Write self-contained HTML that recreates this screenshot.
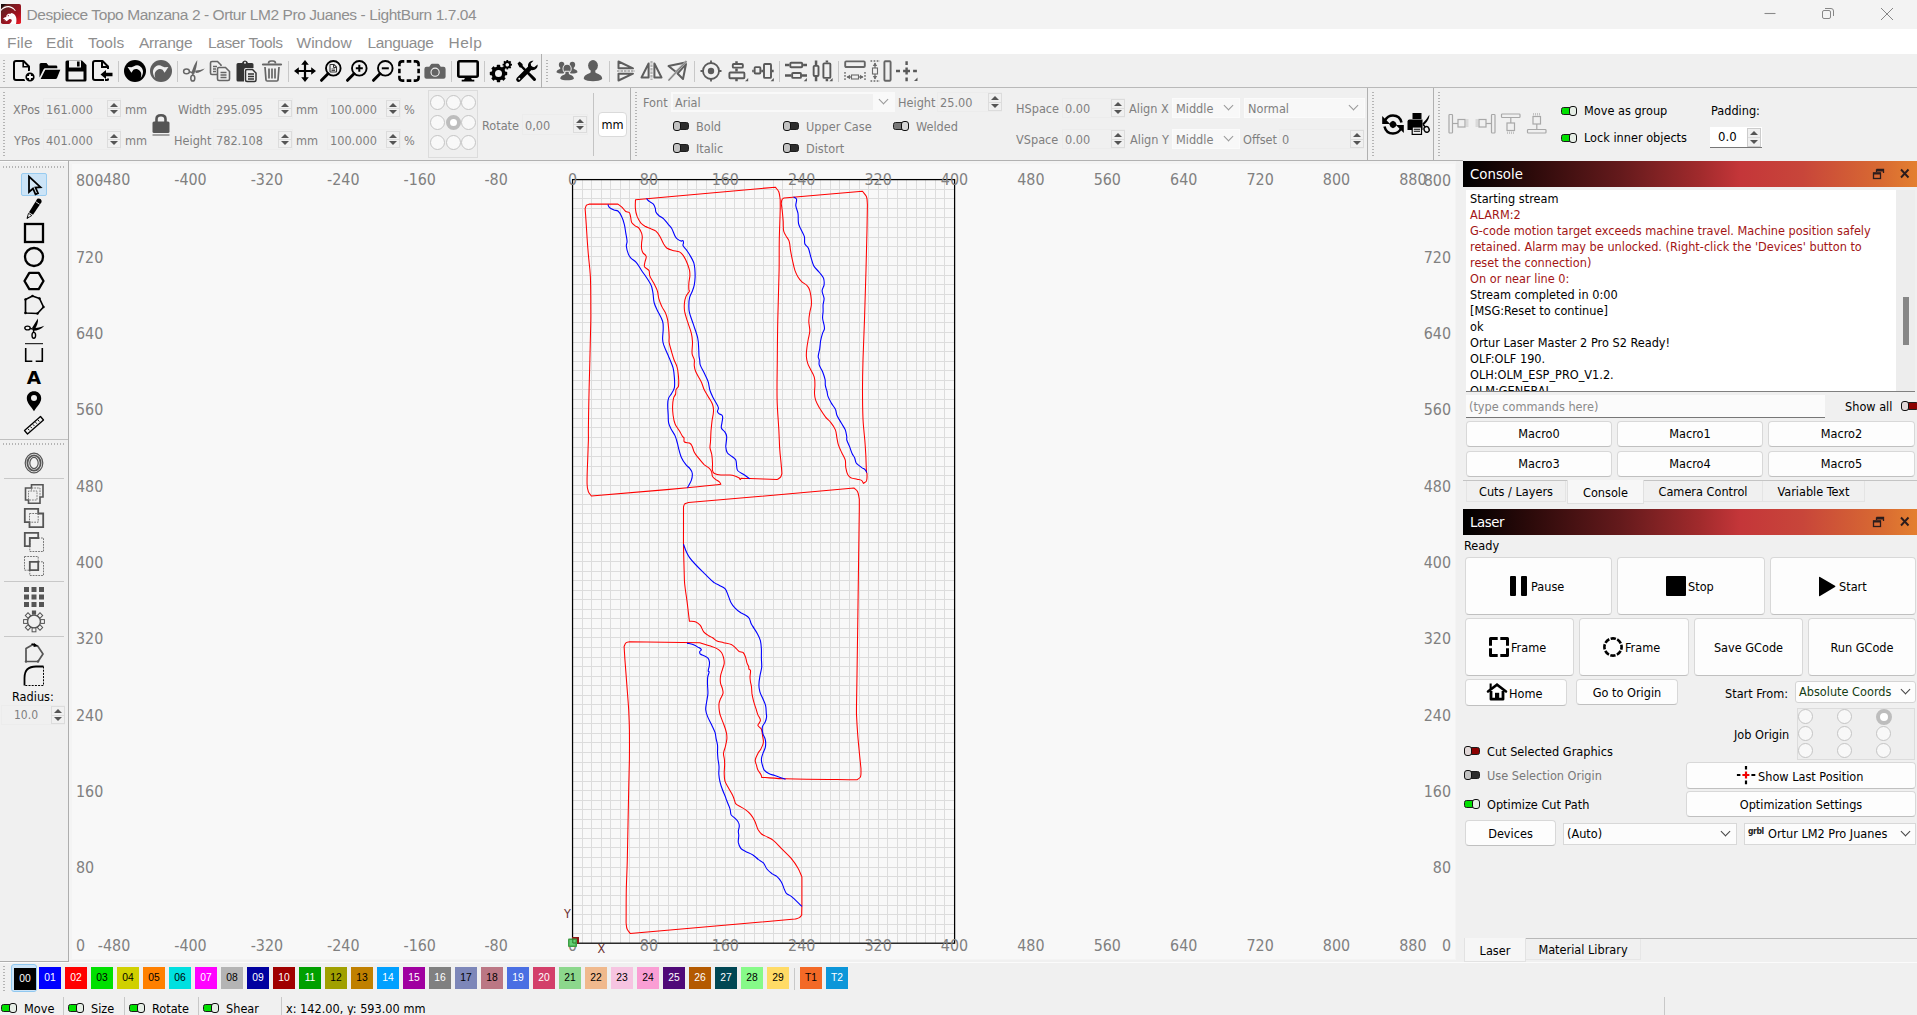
<!DOCTYPE html>
<html lang="en"><head><meta charset="utf-8"><title>Despiece Topo Manzana 2 - Ortur LM2 Pro Juanes - LightBurn 1.7.04</title>
<style>
*,*:before,*:after{box-sizing:border-box;margin:0;padding:0}
html,body{width:1917px;height:1015px;overflow:hidden;background:#f0f0f0}
body{font-family:"DejaVu Sans Condensed","Liberation Sans",sans-serif;font-size:12.6px;color:#000}
#app{position:relative;width:1917px;height:1015px;overflow:hidden;background:#f0f0f0}
.abs{position:absolute}
.t{position:absolute;white-space:nowrap;line-height:16px;height:16px}
.g{color:#7f7f7f}
#titlebar{position:absolute;left:0;top:0;width:1917px;height:29px;background:#f3f3f3}
#titlebar .ttl{font-family:"Liberation Sans",sans-serif;position:absolute;left:26.5px;top:4px;font-size:15.5px;letter-spacing:-0.42px;line-height:22px;color:#8f8f8f;white-space:nowrap}
#menubar{position:absolute;left:0;top:29px;width:1917px;height:25px;background:#fff}
#menubar span{font-family:"Liberation Sans",sans-serif;position:absolute;top:4px;font-size:15.5px;line-height:20px;color:#8e8e8e;white-space:nowrap}
.hline{position:absolute;height:1px;background:#a0a0a0}
.vline{position:absolute;width:1px;background:#a0a0a0}
.sep{position:absolute;width:1px;background:#c8c8c8}
.hsep{position:absolute;height:1px;background:#c8c8c8}
.vdots{position:absolute;width:2px;background:repeating-linear-gradient(to bottom,#b4b4b4 0 1px,transparent 1px 3px)}
.hdots{position:absolute;height:2px;background:repeating-linear-gradient(to right,#b4b4b4 0 1px,transparent 1px 3px)}
.ic{position:absolute;overflow:visible}
.inp{position:absolute;border:1px solid #ececec;background:#f0f0f0;color:#7f7f7f;font-size:12.6px;line-height:19px;padding-left:3px;white-space:nowrap}
.spin{position:absolute;width:14px;border:1px solid #dcdcdc;background:#f0f0f0}
.spin:before{content:"";position:absolute;left:2px;top:2px;border:4px solid transparent;border-top:0;border-bottom:4px solid #555}
.spin:after{content:"";position:absolute;left:2px;bottom:2px;border:4px solid transparent;border-bottom:0;border-top:4px solid #555}
.spin i{position:absolute;left:0;right:0;top:50%;height:1px;background:#dcdcdc;margin-top:-0.5px}
.combo{position:absolute;border:1px solid #fbfbfb;background:#f8f8f8;color:#7f7f7f;font-size:12.6px;line-height:18px;padding-left:3px;padding-top:1px;white-space:nowrap}
.chev{position:absolute;width:7px;height:7px;border-right:1px solid #999;border-bottom:1px solid #999;transform:rotate(45deg)}
.tog{position:absolute;width:16px;height:10px}
.tog:before{content:"";position:absolute;left:1px;right:0;top:1px;height:8px;border-radius:2.5px;background:#2d2d2d;border:1px solid #1c1c1c}
.tog.on:before{left:0;right:1px}
.tog i{position:absolute;top:0;width:8px;height:10px;border-radius:3px;background:#c2c2c2;border:1px solid #111}
.tog.off i{left:0}
.tog.on i{right:0;background:#e6eee6}
.tog.green:before{background:#00e000}
.tog.red:before{background:#8b0000}
.tog.red i{background:#e2d8d8}
.tog.gray:before{background:#777}
.tog.gray i{background:#d8d8d8}
.btn{position:absolute;background:#fdfdfd;border:1px solid #d8d8d8;border-bottom-color:#c0c0c0;border-radius:4px;font-size:12.6px;text-align:center;white-space:nowrap;color:#000}
.ptitle{position:absolute;left:1463px;width:454px;height:26px;background:linear-gradient(to right,#000 0%,#2c0a0a 15%,#651a1c 35%,#a02a2c 52%,#c43639 61%,#c8463a 75%,#d86a32 92%,#e48030 100%);color:#fff;font-size:14.8px;line-height:25px;padding-left:7px}
.ptitle svg{position:absolute;top:0}
.radio{position:absolute;width:15px;height:15px;border-radius:50%;border:1px solid #c4c4c4;background:#f8f8f8}
.radio.sel{border:4px solid #bdbdbd;background:#fff}
.sw{position:absolute;top:967px;width:22px;height:22px;font-family:"Liberation Sans",sans-serif;font-size:10.3px;line-height:22px;text-align:center}
.tab{position:absolute;font-size:12.6px;text-align:center;white-space:nowrap;padding-top:1px}

.t2{margin-top:1px}
.t2i{padding-top:1px;padding-left:2px}
.r16{width:16px;height:16px}

</style></head>
<body>
<div id="app">
<!-- titlebar.html -->
<div id="titlebar">
<svg class="ic" style="left:1px;top:4px" width="20" height="20" viewBox="0 0 20 20"><defs><linearGradient id="lg0" x1="0" y1="0" x2="1" y2="1"><stop offset="0" stop-color="#4a2a22"/><stop offset="0.350" stop-color="#7a1a20"/><stop offset="0.700" stop-color="#a81220"/><stop offset="1" stop-color="#f61c26"/></linearGradient></defs><rect x="0" y="0" width="20" height="20" rx="1.800" fill="url(#lg0)"/><path d="M0 0 H6 C3.500 1 1.500 2.600 0 4.800 Z" fill="#1e0c0c"/><path d="M0 5.600 C2.500 2.400 6 1.600 9 2.300 C11.800 3 13.800 4.800 14.900 7 L13.700 6.700 C12.500 5 10.800 3.800 8.600 3.400 C5.500 2.900 2.500 4.200 0 7 Z" fill="#fff"/><path d="M6.300 10.600 L8 9.600 L9 10 L10.500 9 C12.500 9.300 14.300 10.800 15 13 C15.600 15 15.600 17.500 15 20 H8.200 C9.800 19 10.800 17.600 10.800 16 C10 15 8.800 14.800 7.800 15.600 L6 17 L4.600 17.200 L5.200 16.200 L3.200 16.300 L4.200 15.300 L2 15 C2.600 13.800 4 13.200 5.300 13 C5.200 12 5.600 11.200 6.300 10.600 Z" fill="#fff"/><circle cx="7.300" cy="11.700" r="0.600" fill="#8c1420"/></svg>
<div class="ttl">Despiece Topo Manzana 2 - Ortur LM2 Pro Juanes - LightBurn 1.7.04</div>
<svg class="ic" style="left:1762px;top:7px" width="16" height="14" viewBox="0 0 16 14"><path d="M2.5 6.5 H13.5" stroke="#8a8a8a" stroke-width="1.100" fill="none"/></svg>
<svg class="ic" style="left:1820px;top:6px" width="16" height="16" viewBox="0 0 16 16"><rect x="2.5" y="4.5" width="8" height="8" rx="1.5" stroke="#868686" fill="none"/><path d="M5 2.5 H11 Q13.5 2.5 13.5 5 V10" stroke="#868686" fill="none"/></svg>
<svg class="ic" style="left:1879px;top:6px" width="16" height="16" viewBox="0 0 16 16"><path d="M2 2 L14 14 M14 2 L2 14" stroke="#858585" stroke-width="1" fill="none"/></svg>
</div>
<div id="menubar">
<span style="left:7px;letter-spacing:0.2px">File</span><span style="left:46px;letter-spacing:0.1px">Edit</span><span style="left:88px">Tools</span><span style="left:139px;letter-spacing:-0.27px">Arrange</span><span style="left:208px;letter-spacing:-0.39px">Laser Tools</span><span style="left:296.500px">Window</span><span style="left:367.500px;letter-spacing:-0.36px">Language</span><span style="left:448.500px;letter-spacing:0.5px">Help</span>
</div>

<!-- toolbar1.html -->
<div class="abs" style="left:0;top:54px;width:1917px;height:34px;background:#f0f0f0"></div>
<div class="hline" style="left:0;top:87px;width:1917px;background:#b9b9b9"></div>
<div class="vdots" style="left:3px;top:60px;height:23px"></div>
<div class="vline" style="left:541px;top:54px;height:34px;background:#b0b0b0"></div>
<div class="vdots" style="left:546px;top:60px;height:23px"></div>
<div class="sep" style="left:118px;top:61px;height:21px"></div>
<div class="sep" style="left:177px;top:61px;height:21px"></div>
<div class="sep" style="left:288px;top:61px;height:21px"></div>
<div class="sep" style="left:451px;top:61px;height:21px"></div>
<div class="sep" style="left:484px;top:61px;height:21px"></div>
<div class="sep" style="left:609px;top:61px;height:21px"></div>
<div class="sep" style="left:694px;top:61px;height:21px"></div>
<div class="sep" style="left:779px;top:61px;height:21px"></div>
<div class="sep" style="left:838px;top:61px;height:21px"></div>
<!-- new -->
<svg class="ic" style="left:13px;top:60px" width="22" height="22" viewBox="0 0 22 22"><path d="M12 20 H3 Q1 20 1 18 V3 Q1 1 3 1 H10.5 L16 6.5 V11" fill="none" stroke="#000" stroke-width="2" stroke-linejoin="round"/><path d="M10.2 1.5 V6.8 H15.5" fill="none" stroke="#000" stroke-width="1.6"/><circle cx="17" cy="17" r="5.4" fill="#000" stroke="#f0f0f0" stroke-width="1.6"/><path d="M14.2 17 H19.8 M17 14.2 V19.8" stroke="#fff" stroke-width="1.8"/></svg>
<!-- open -->
<svg class="ic" style="left:39px;top:60px" width="22" height="22" viewBox="0 0 22 22"><path d="M0.5 17.5 V4.5 Q0.5 3 2 3 H7.5 L9.5 5.5 H17 Q18.3 5.5 18.3 6.8 V8.3 H6.2 Q5 8.3 4.5 9.5 Z" fill="#000"/><path d="M6.3 9.8 H21.3 L18 18 Q17.6 19 16.5 19 H1.6 Z" fill="#000"/></svg>
<!-- save -->
<svg class="ic" style="left:65px;top:60px" width="22" height="22" viewBox="0 0 22 22"><path d="M0.5 2 Q0.5 0.5 2 0.5 H17 L21.5 5 V20 Q21.5 21.5 20 21.5 H2 Q0.5 21.5 0.5 20 Z" fill="#000"/><rect x="4" y="0.5" width="12" height="7" fill="#f0f0f0"/><rect x="12" y="1.5" width="2.6" height="5" fill="#000"/><rect x="3.5" y="11.5" width="15" height="8" fill="#f0f0f0"/></svg>
<!-- import -->
<svg class="ic" style="left:91px;top:60px" width="22" height="22" viewBox="0 0 22 22"><path d="M13 20 H4 Q2 20 2 18 V3 Q2 1 4 1 H11.5 L17 6.5 V9" fill="none" stroke="#000" stroke-width="2" stroke-linejoin="round"/><path d="M11 1.5 V7 H16.5" fill="none" stroke="#000" stroke-width="2"/><path d="M9.5 14.5 L15 10 V12.8 H21.5 V16.2 H15 V19 Z" fill="#000"/><path d="M17 18.5 V19.5 Q17 20 16 20 H14" stroke="#000" stroke-width="2" fill="none"/></svg>
<!-- undo -->
<svg class="ic" style="left:124px;top:60px" width="22" height="22" viewBox="0 0 22 22"><circle cx="11" cy="11" r="11" fill="#000"/><path d="M3.600 7 L7.400 7.200 C9.200 6.800 10.600 5.400 13 5.200 C15 5.100 16.300 6.200 17.400 7.500 C19.600 10.200 19.800 13.600 16.700 18 C17.800 14.500 17.400 12.300 15.700 10.700 C14 9 11.600 8.500 9.400 9.800 L7.400 12.700 Z" fill="#f0f0f0"/></svg>
<!-- redo -->
<svg class="ic" style="left:150px;top:60px" width="22" height="22" viewBox="0 0 22 22"><circle cx="11" cy="11" r="11" fill="#5e5e5e"/><g transform="translate(22,0) scale(-1,1)"><path d="M3.600 7 L7.400 7.200 C9.200 6.800 10.600 5.400 13 5.200 C15 5.100 16.300 6.200 17.400 7.500 C19.600 10.200 19.800 13.600 16.700 18 C17.800 14.500 17.400 12.300 15.700 10.700 C14 9 11.600 8.500 9.400 9.800 L7.400 12.700 Z" fill="#f0f0f0"/></g></svg>
<!-- cut -->
<svg class="ic" style="left:182px;top:60px" width="23" height="22" viewBox="0 0 23 22"><g fill="#666"><path d="M15.300 0.300 C13.500 2.500 12 5 9.300 13.200 L12.200 13.900 C14 10 15.100 5 15.300 0.300 Z"/><path d="M22.800 8.500 C19.500 9.800 17 10.200 13 10.800 L13.800 13 C17 12.800 20 11.500 22.800 8.500 Z"/></g><g fill="none" stroke="#666" stroke-width="1.500"><ellipse cx="4.500" cy="11.400" rx="2.900" ry="2.300"/><ellipse cx="10.800" cy="18.200" rx="2" ry="2.900"/><path d="M7.400 11.600 L10.500 12.700 M10.800 15.300 L11 13"/></g></svg>
<!-- copy -->
<svg class="ic" style="left:209px;top:60px" width="22" height="22" viewBox="0 0 22 22"><path d="M8 14.5 H3 Q1.5 14.5 1.5 13 V3 Q1.5 1.5 3 1.5 H8.5 L12 5 V6" fill="none" stroke="#666" stroke-width="1.6"/><path d="M4 6.5 H8 M4 9 H7 M4 11.5 H7" stroke="#666" stroke-width="1.3"/><path d="M10 7.5 H16.5 L20.5 11.5 V19 Q20.5 20.5 19 20.5 H10 Q8.5 20.5 8.5 19 V9 Q8.5 7.5 10 7.5 Z" fill="#f0f0f0" stroke="#666" stroke-width="1.6"/><path d="M11.5 12.5 H17.5 M11.5 15 H17.5 M11.5 17.5 H17.5" stroke="#666" stroke-width="1.4"/></svg>
<!-- paste -->
<svg class="ic" style="left:235px;top:60px" width="22" height="22" viewBox="0 0 22 22"><path d="M3 3 H7 Q7.5 0.5 10 0.5 Q12.500 0.5 13 3 H17 Q18.500 3 18.500 4.500 V8 H11 Q9 8 9 10 V21.500 H3 Q1.500 21.500 1.500 20 V4.500 Q1.500 3 3 3 Z" fill="#333"/><circle cx="10" cy="2.800" r="1" fill="#f0f0f0"/><path d="M12 9.500 H17.500 L21 13 V20 Q21 21.500 19.500 21.500 H12 Q10.500 21.500 10.500 20 V11 Q10.500 9.500 12 9.500 Z" fill="#f0f0f0" stroke="#333" stroke-width="1.500"/><path d="M13 14 H19 M13 16.500 H19 M13 19 H19" stroke="#333" stroke-width="1.400"/></svg>
<!-- trash -->
<svg class="ic" style="left:261px;top:60px" width="22" height="22" viewBox="0 0 22 22"><path d="M7.500 3.500 Q7.500 1 10 1 H12 Q14.500 1 14.500 3.500" fill="none" stroke="#666" stroke-width="1.600"/><path d="M2 4.500 H20" stroke="#666" stroke-width="2.200" stroke-linecap="round"/><path d="M4 7 L5 20 Q5.100 21 6.200 21 H15.800 Q16.900 21 17 20 L18 7" fill="none" stroke="#666" stroke-width="1.700"/><path d="M8 8.500 V18.500 M11 8.500 V18.500 M14 8.500 V18.500" stroke="#666" stroke-width="1.700"/></svg>
<!-- move -->
<svg class="ic" style="left:294px;top:60px" width="22" height="22" viewBox="0 0 22 22"><path d="M11 2 V20 M2 11 H20" stroke="#000" stroke-width="2.200"/><path d="M11 0 L14.800 4.800 H7.200 Z M11 22 L14.800 17.200 H7.200 Z M0 11 L4.800 7.200 V14.800 Z M22 11 L17.200 7.200 V14.800 Z" fill="#000"/></svg>
<!-- zoom page -->
<svg class="ic" style="left:320px;top:60px" width="22" height="22" viewBox="0 0 22 22"><circle cx="13.300" cy="8.300" r="7.300" fill="none" stroke="#000" stroke-width="1.900"/><path d="M8 13.800 L1.500 20.300" stroke="#000" stroke-width="3" stroke-linecap="round"/><path d="M10.500 4.500 H14 L16.500 7 V11.500 Q16.500 12 16 12 H10.500 Q10 12 10 11.500 V5 Q10 4.500 10.500 4.500 Z" fill="none" stroke="#333" stroke-width="1.100"/><path d="M13.500 5 V7.500 H16" stroke="#333" stroke-width="1" fill="none"/><path d="M11.500 9 H15 M11.500 10.500 H15" stroke="#333" stroke-width="0.900"/></svg>
<!-- zoom in -->
<svg class="ic" style="left:346px;top:60px" width="22" height="22" viewBox="0 0 22 22"><circle cx="13.300" cy="8.300" r="7.300" fill="none" stroke="#000" stroke-width="1.900"/><path d="M8 13.800 L1.500 20.300" stroke="#000" stroke-width="3" stroke-linecap="round"/><path d="M9.800 8.300 H16.800 M13.300 4.800 V11.800" stroke="#000" stroke-width="2"/></svg>
<!-- zoom out -->
<svg class="ic" style="left:372px;top:60px" width="22" height="22" viewBox="0 0 22 22"><circle cx="13.300" cy="8.300" r="7.300" fill="none" stroke="#000" stroke-width="1.900"/><path d="M8 13.800 L1.500 20.300" stroke="#000" stroke-width="3" stroke-linecap="round"/><path d="M9.800 8.300 H16.800" stroke="#000" stroke-width="2"/></svg>
<!-- select rect -->
<svg class="ic" style="left:398px;top:60px" width="22" height="22" viewBox="0 0 22 22"><path d="M1.400 6.300 V4.200 Q1.400 1.400 4.200 1.400 H6.300 M15.700 1.400 H17.800 Q20.600 1.400 20.600 4.200 V6.300 M20.600 15.700 V17.800 Q20.600 20.600 17.800 20.600 H15.700 M6.300 20.600 H4.200 Q1.400 20.600 1.400 17.800 V15.700 M8.700 1.400 H13.300 M8.700 20.600 H13.300 M1.400 8.700 V13.300 M20.600 8.700 V13.300" fill="none" stroke="#000" stroke-width="2.600"/></svg>
<!-- camera -->
<svg class="ic" style="left:424px;top:60px" width="22" height="22" viewBox="0 0 22 22"><path d="M2.500 6.800 H5.300 L6.800 4.400 Q7.200 3.800 8 3.800 H14 Q14.800 3.800 15.200 4.400 L16.700 6.800 H19.500 Q21.600 6.800 21.600 8.900 V16.700 Q21.600 18.800 19.500 18.800 H2.500 Q0.400 18.800 0.400 16.700 V8.900 Q0.400 6.800 2.500 6.800 Z" fill="#646464"/><circle cx="11.100" cy="12.200" r="4.100" fill="#646464" stroke="#f0f0f0" stroke-width="1.100"/></svg>
<!-- monitor -->
<svg class="ic" style="left:457px;top:60px" width="22" height="22" viewBox="0 0 22 22"><rect x="1.300" y="1.300" width="19.400" height="15.400" rx="1.400" fill="none" stroke="#000" stroke-width="2.600"/><path d="M8.300 17 H13.700 L15 20 H7 Z" fill="#000"/><path d="M4.700 20.600 H17.300" stroke="#000" stroke-width="1.800"/></svg>
<!-- gears -->
<svg class="ic" style="left:490px;top:60px" width="22" height="22" viewBox="0 0 22 22"><g transform="translate(8.500,13.500)"><circle r="5.300" fill="none" stroke="#000" stroke-width="3.600"/><g fill="#000"><rect x="-1.700" y="-8.700" width="3.400" height="3.500" rx="0.600"/><rect x="-1.700" y="-8.700" width="3.400" height="3.500" rx="0.600" transform="rotate(45)"/><rect x="-1.700" y="-8.700" width="3.400" height="3.500" rx="0.600" transform="rotate(90)"/><rect x="-1.700" y="-8.700" width="3.400" height="3.500" rx="0.600" transform="rotate(135)"/><rect x="-1.700" y="-8.700" width="3.400" height="3.500" rx="0.600" transform="rotate(180)"/><rect x="-1.700" y="-8.700" width="3.400" height="3.500" rx="0.600" transform="rotate(225)"/><rect x="-1.700" y="-8.700" width="3.400" height="3.500" rx="0.600" transform="rotate(270)"/><rect x="-1.700" y="-8.700" width="3.400" height="3.500" rx="0.600" transform="rotate(315)"/></g></g><g transform="translate(17.300,4.700)"><circle r="2.700" fill="none" stroke="#000" stroke-width="1.900"/><g fill="#000"><rect x="-0.900" y="-4.700" width="1.800" height="2" /><rect x="-0.900" y="-4.700" width="1.800" height="2" transform="rotate(45)"/><rect x="-0.900" y="-4.700" width="1.800" height="2" transform="rotate(90)"/><rect x="-0.900" y="-4.700" width="1.800" height="2" transform="rotate(135)"/><rect x="-0.900" y="-4.700" width="1.800" height="2" transform="rotate(180)"/><rect x="-0.900" y="-4.700" width="1.800" height="2" transform="rotate(225)"/><rect x="-0.900" y="-4.700" width="1.800" height="2" transform="rotate(270)"/><rect x="-0.900" y="-4.700" width="1.800" height="2" transform="rotate(315)"/></g></g></svg>
<!-- wrench -->
<svg class="ic" style="left:516px;top:60px" width="22" height="22" viewBox="0 0 22 22"><path d="M2.500 19.500 L14 8" stroke="#000" stroke-width="4.600" stroke-linecap="round"/><path d="M17.500 0.800 C14.500 0.500 11.800 2.800 12 6 C12.100 7.500 12.800 8.700 13.500 9.300 C15.500 10.800 18.500 10.500 20.300 8.600 C21.400 7.400 21.800 6 21.600 4.500 L18.200 7.300 L15.300 6.300 L14.700 3.500 Z" fill="#000"/><circle cx="3.300" cy="18.800" r="1" fill="#f0f0f0"/><path d="M1.500 3.500 L3.500 1.500 L6.500 4 L6.800 6 L19.500 18.200 Q20.600 19.500 19.600 20.600 Q18.500 21.500 17.300 20.500 L5.300 7.800 L3.500 7.300 Z" fill="#000"/></svg>
<!-- group -->
<svg class="ic" style="left:555px;top:60px" width="24" height="22" viewBox="0 0 24 22"><g fill="#5e5e5e"><g transform="translate(1,1.700) scale(0.560)"><ellipse cx="10" cy="5.600" rx="4.900" ry="5.500"/><path d="M0.800 19 C0.800 15 4.500 14.500 7.600 12.600 L7.800 9.500 H12.200 L12.400 12.600 C15.500 14.500 19.200 15 19.200 19 C16 22 4 22 0.800 19 Z"/></g><g transform="translate(11.800,1.700) scale(0.560)"><ellipse cx="10" cy="5.600" rx="4.900" ry="5.500"/><path d="M0.800 19 C0.800 15 4.500 14.500 7.600 12.600 L7.800 9.500 H12.200 L12.400 12.600 C15.500 14.500 19.200 15 19.200 19 C16 22 4 22 0.800 19 Z"/></g></g><g fill="#5e5e5e" stroke="#f0f0f0" stroke-width="2.600" paint-order="stroke" transform="translate(4.700,4.600) scale(0.740)"><ellipse cx="10" cy="5.600" rx="4.900" ry="5.500"/><path d="M0.800 19 C0.800 15 4.500 14.500 7.600 12.600 L7.800 9.500 H12.200 L12.400 12.600 C15.500 14.500 19.200 15 19.200 19 C16 22 4 22 0.800 19 Z"/></g></svg>
<!-- person -->
<svg class="ic" style="left:583px;top:60px" width="20" height="22" viewBox="0 0 20 22"><g fill="#5e5e5e"><ellipse cx="10" cy="5.600" rx="4.900" ry="5.500"/><path d="M0.800 19 C0.800 15 4.500 14.500 7.600 12.600 L7.800 9.500 H12.200 L12.400 12.600 C15.500 14.500 19.200 15 19.200 19 C16 22 4 22 0.800 19 Z"/></g></svg>
<!-- flip H -->
<svg class="ic" style="left:616px;top:60px" width="20" height="22" viewBox="0 0 20 22"><path d="M2.500 1.500 L17 8.300 H2.500 Z" fill="none" stroke="#5e5e5e" stroke-width="2" stroke-linejoin="round"/><path d="M2.500 20.500 L17 13.700 H2.500 Z" fill="none" stroke="#5e5e5e" stroke-width="2" stroke-linejoin="round"/><path d="M1 11 H19" stroke="#b4b4b4" stroke-width="2.200" stroke-dasharray="2.500 1"/></svg>
<!-- flip V -->
<svg class="ic" style="left:640px;top:60px" width="23" height="22" viewBox="0 0 23 22"><path d="M1.500 17.500 L8.600 3.500 V17.500 Z" fill="none" stroke="#5e5e5e" stroke-width="2" stroke-linejoin="round"/><path d="M21.500 17.500 L14.400 3.500 V17.500 Z" fill="none" stroke="#5e5e5e" stroke-width="2" stroke-linejoin="round"/><path d="M11.500 1 V20" stroke="#b4b4b4" stroke-width="2.200" stroke-dasharray="2.500 1"/></svg>
<!-- flip diag -->
<svg class="ic" style="left:667px;top:60px" width="21" height="22" viewBox="0 0 21 22"><path d="M1.500 6 L18.500 2.500 L9 12 Z" fill="none" stroke="#5e5e5e" stroke-width="2" stroke-linejoin="round"/><path d="M16 19 L19 4 L10.500 13.500 Z" fill="none" stroke="#5e5e5e" stroke-width="2" stroke-linejoin="round"/><path d="M1.500 20.500 L19.500 1" stroke="#b4b4b4" stroke-width="2"/><path d="M1.500 20.500 L19.500 1" stroke="#6a6a6a" stroke-width="0.800"/></svg>
<!-- target -->
<svg class="ic" style="left:700px;top:60px" width="22" height="22" viewBox="0 0 22 22"><circle cx="11" cy="11" r="8" fill="none" stroke="#5a5a5a" stroke-width="1.800"/><circle cx="11" cy="11" r="3.200" fill="#5a5a5a"/><path d="M11 0.500 V4 M11 18 V21.500 M0.500 11 H4 M18 11 H21.500" stroke="#5a5a5a" stroke-width="1.800"/></svg>
<!-- align 1 -->
<svg class="ic" style="left:728px;top:60px" width="22" height="22" viewBox="0 0 22 22"><g fill="none" stroke="#595959" stroke-width="1.900" stroke-linejoin="round"><rect x="4.800" y="4" width="10.050" height="3.600" rx="0.900"/><rect x="1.400" y="12.500" width="15" height="5.700" rx="0.900"/></g><path d="M8.500 1.200 V3.100 M8.500 8.500 V11.600 M8.500 19.100 V21.200" stroke="#595959" stroke-width="2.500"/><path d="M20.200 18 V21.200 H17 Z" fill="#595959"/></svg>
<!-- align 2 -->
<svg class="ic" style="left:752px;top:60px" width="23" height="22" viewBox="0 0 23 22"><g fill="none" stroke="#595959" stroke-width="1.900" stroke-linejoin="round"><rect x="2.650" y="7.150" width="5.700" height="6.350" rx="0.900"/><rect x="12" y="4" width="7" height="13.850" rx="0.900"/></g><path d="M0.200 11 H1.750 M9.250 11 H11.100 M19.900 11 H21.700" stroke="#595959" stroke-width="2.500"/><path d="M21.800 18 V21.200 H18.600 Z" fill="#595959"/></svg>
<!-- dist 1 -->
<svg class="ic" style="left:785px;top:60px" width="22" height="22" viewBox="0 0 22 22"><g fill="none" stroke="#595959" stroke-width="1.900" stroke-linejoin="round"><rect x="5.300" y="2.800" width="11.900" height="4.400" rx="0.900"/><rect x="7.150" y="13" width="8.850" height="4.850" rx="0.900"/></g><path d="M0 5 H4.400 M18.100 5 H22 M0 15.400 H6.250 M16.900 15.400 H22" stroke="#595959" stroke-width="2.500"/><path d="M21.900 18 V21.200 H18.700 Z" fill="#595959"/></svg>
<!-- dist 2 -->
<svg class="ic" style="left:812px;top:60px" width="22" height="22" viewBox="0 0 22 22"><g fill="none" stroke="#595959" stroke-width="1.900" stroke-linejoin="round"><rect x="1.650" y="5.900" width="4.850" height="10.100" rx="0.900"/><rect x="11.400" y="3.400" width="6.950" height="14.450" rx="0.900"/></g><path d="M4.050 0.600 V5 M4.050 16.900 V21.200 M14.900 0.600 V2.500 M14.900 18.750 V21.200" stroke="#595959" stroke-width="2.500"/><path d="M20.600 18 V21.200 H17.400 Z" fill="#595959"/></svg>
<!-- size 1 -->
<svg class="ic" style="left:844px;top:60px" width="22" height="22" viewBox="0 0 22 22"><rect x="1.200" y="1.400" width="19.600" height="5.600" rx="1" fill="none" stroke="#666" stroke-width="1.900"/><path d="M1 12 V20 M21 12 V20" stroke="#6a6a6a" stroke-width="1.400" stroke-dasharray="1.700 1.400"/><path d="M3 17 H19" stroke="#6a6a6a" stroke-width="1.200"/><path d="M2.500 17 L6 14.800 V19.200 Z M19.500 17 L16 14.800 V19.200 Z" fill="#6a6a6a"/><rect x="7.500" y="15" width="7" height="4" fill="#f0f0f0" stroke="#6a6a6a" stroke-width="1.100"/></svg>
<!-- size 2 -->
<svg class="ic" style="left:870px;top:60px" width="23" height="22" viewBox="0 0 23 22"><rect x="14.400" y="1.300" width="6.200" height="19.400" rx="1" fill="none" stroke="#666" stroke-width="1.900"/><path d="M0.500 1 H10 M0.500 21 H10" stroke="#6a6a6a" stroke-width="1.400" stroke-dasharray="1.700 1.400"/><path d="M5 3 V19" stroke="#6a6a6a" stroke-width="1.200"/><path d="M5 2.500 L2.800 6 H7.200 Z M5 19.500 L2.800 16 H7.200 Z" fill="#6a6a6a"/><rect x="2.500" y="8" width="5" height="6" fill="#f0f0f0" stroke="#6a6a6a" stroke-width="1.100"/></svg>
<!-- size 3 -->
<svg class="ic" style="left:896px;top:60px" width="22" height="22" viewBox="0 0 22 22"><path d="M10.600 1.200 V5 M10.600 7.500 V14.400 M10.600 17.500 V21.200 M0 11 H4 M7.100 11 H14 M17.100 11 H20.900" stroke="#595959" stroke-width="2.400"/><path d="M21.500 17.500 V21 H18 Z" fill="#5a5a5a"/></svg>

<!-- toolbar2.html -->
<div class="hline" style="left:0;top:160px;width:1463px;background:#b2b2b2"></div>
<div class="vdots" style="left:3px;top:92px;height:64px"></div>
<!-- XPos / YPos -->
<div class="t g t2" style="left:13px;top:101px">XPos</div>
<div class="inp t2i" style="left:43px;top:98px;width:78px;height:21px">161.000</div><div class="spin" style="left:107px;top:100px;height:17px"><i></i></div>
<div class="t g t2" style="left:125px;top:101px">mm</div>
<div class="t g t2" style="left:14px;top:132px">YPos</div>
<div class="inp t2i" style="left:43px;top:129px;width:78px;height:21px">401.000</div><div class="spin" style="left:107px;top:131px;height:17px"><i></i></div>
<div class="t g t2" style="left:125px;top:132px">mm</div>
<!-- lock -->
<svg class="ic" style="left:152px;top:113px" width="18" height="24" viewBox="0 0 18 24"><path d="M4.500 9 V6 Q4.500 2.200 9 2.200 Q13.500 2.200 13.500 6 V9" fill="none" stroke="#555" stroke-width="2.600"/><rect x="0.500" y="8.500" width="17" height="11.500" rx="1.500" fill="#555"/><path d="M0.500 22 H17.500" stroke="#555" stroke-width="1"/></svg>
<!-- Width / Height -->
<div class="t g t2" style="left:178px;top:101px">Width</div>
<div class="inp t2i" style="left:213px;top:98px;width:80px;height:21px">295.095</div><div class="spin" style="left:278px;top:100px;height:17px"><i></i></div>
<div class="t g t2" style="left:296px;top:101px">mm</div>
<div class="t g t2" style="left:174px;top:132px">Height</div>
<div class="inp t2i" style="left:213px;top:129px;width:80px;height:21px">782.108</div><div class="spin" style="left:278px;top:131px;height:17px"><i></i></div>
<div class="t g t2" style="left:296px;top:132px">mm</div>
<div class="inp t2i" style="left:327px;top:98px;width:74px;height:21px">100.000</div><div class="spin" style="left:386px;top:100px;height:17px"><i></i></div>
<div class="t g t2" style="left:404px;top:101px">%</div>
<div class="inp t2i" style="left:327px;top:129px;width:74px;height:21px">100.000</div><div class="spin" style="left:386px;top:131px;height:17px"><i></i></div>
<div class="t g t2" style="left:404px;top:132px">%</div>
<!-- 9 dot -->
<div class="abs" style="left:428px;top:90px;width:50px;height:68px;border:1px solid #dcdcdc;background:#efefef"></div>
<div class="radio" style="left:430px;top:95px"></div><div class="radio" style="left:446px;top:95px"></div><div class="radio" style="left:461px;top:95px"></div>
<div class="radio" style="left:430px;top:115px"></div><div class="radio sel" style="left:446px;top:115px"></div><div class="radio" style="left:461px;top:115px"></div>
<div class="radio" style="left:430px;top:135px"></div><div class="radio" style="left:446px;top:135px"></div><div class="radio" style="left:461px;top:135px"></div>
<div class="t g t2" style="left:482px;top:117px">Rotate</div>
<div class="inp t2i" style="left:522px;top:114px;width:66px;height:21px">0,00</div><div class="spin" style="left:573px;top:116px;height:17px"><i></i></div>
<div class="sep" style="left:593px;top:93px;height:63px;background:#c4c4c4"></div>
<div class="btn" style="left:598px;top:112px;width:29px;height:25px;line-height:23px;border-radius:4px;background:#fff;border-color:#dadada">mm</div>
<div class="vline" style="left:630px;top:88px;height:72px;background:#b0b0b0"></div>
<div class="vdots" style="left:635px;top:92px;height:64px"></div>
<!-- Font -->
<div class="t g t2" style="left:643px;top:94px">Font</div>
<div class="abs" style="left:671px;top:92px;width:224px;height:20px;background:#f9f9f9"></div>
<div class="abs" style="left:673px;top:94px;width:200px;height:16px;background:#f0f0f0"></div>
<div class="t g t2" style="left:675px;top:94px">Arial</div>
<div class="chev" style="left:880px;top:96px"></div>
<div class="t g t2" style="left:898px;top:94px">Height</div>
<div class="inp t2i" style="left:937px;top:92px;width:65px;height:20px;line-height:18px">25.00</div><div class="spin" style="left:988px;top:93px;height:18px"><i></i></div>
<div class="tog off" style="left:673px;top:121px"><i></i></div><div class="t g t2" style="left:696px;top:118px">Bold</div>
<div class="tog off" style="left:783px;top:121px"><i></i></div><div class="t g t2" style="left:806px;top:118px">Upper Case</div>
<div class="tog on gray" style="left:893px;top:121px"><i></i></div><div class="t g t2" style="left:916px;top:118px">Welded</div>
<div class="tog off" style="left:673px;top:143px"><i></i></div><div class="t g t2" style="left:696px;top:140px">Italic</div>
<div class="tog off" style="left:783px;top:143px"><i></i></div><div class="t g t2" style="left:806px;top:140px">Distort</div>
<!-- HSpace etc -->
<div class="t g t2" style="left:1016px;top:100px">HSpace</div>
<div class="inp t2i" style="left:1062px;top:98px;width:63px;height:20px;line-height:18px">0.00</div><div class="spin" style="left:1111px;top:99px;height:18px"><i></i></div>
<div class="t g t2" style="left:1129px;top:100px">Align X</div>
<div class="combo" style="left:1172px;top:98px;width:68px;height:20px">Middle</div><div class="chev" style="left:1225px;top:102px"></div>
<div class="combo" style="left:1244px;top:98px;width:121px;height:20px">Normal</div><div class="chev" style="left:1350px;top:102px"></div>
<div class="t g t2" style="left:1016px;top:131px">VSpace</div>
<div class="inp t2i" style="left:1062px;top:129px;width:63px;height:20px;line-height:18px">0.00</div><div class="spin" style="left:1111px;top:130px;height:18px"><i></i></div>
<div class="t g t2" style="left:1130px;top:131px">Align Y</div>
<div class="combo" style="left:1172px;top:129px;width:68px;height:20px">Middle</div><div class="chev" style="left:1225px;top:133px"></div>
<div class="t g t2" style="left:1243px;top:131px">Offset</div>
<div class="inp t2i" style="left:1279px;top:129px;width:85px;height:20px;line-height:18px">0</div><div class="spin" style="left:1350px;top:130px;height:18px"><i></i></div>
<div class="vline" style="left:1367px;top:88px;height:72px;background:#b0b0b0"></div>
<div class="vdots" style="left:1372px;top:92px;height:64px"></div>
<!-- rotate eye icon -->
<svg class="ic" style="left:1382px;top:114px" width="22" height="21" viewBox="0 0 22 21"><g transform="translate(22,0) scale(-1,1)"><path d="M2.500 8.500 C3.500 4 7 1.500 11 1.500 C14.500 1.500 17.500 3.500 19 6.500" fill="none" stroke="#000" stroke-width="2.500"/><path d="M19.500 12.500 C18.500 17 15 19.500 11 19.500 C7.500 19.500 4.500 17.500 3 14.500" fill="none" stroke="#000" stroke-width="2.500"/><path d="M21.800 2 V10 H13.800 Z" fill="#000"/><path d="M0.200 19 V11 H8.200 Z" fill="#000"/><path d="M11 6.800 Q14 7.500 14.600 10.500 Q14 13.500 11 14.200 Q8 13.500 7.400 10.500 Q8 7.500 11 6.800 Z" fill="#000"/></g></svg>
<!-- print cut icon -->
<svg class="ic" style="left:1407px;top:113px" width="24" height="22" viewBox="0 0 24 22"><rect x="5.500" y="0" width="9" height="6" fill="#000"/><path d="M2.500 6.500 H15.500 V17 H0.500 V8.500 Q0.500 6.500 2.500 6.500 Z" fill="#000"/><rect x="5.200" y="14" width="9.300" height="7.400" fill="#f6f6f6" stroke="#000" stroke-width="1.200"/><path d="M6.800 16.200 H13 M6.800 18.300 H13" stroke="#000" stroke-width="1.100"/><path d="M22.300 1.800 C22.600 5.500 20 9.500 16.300 12.300 L15.300 10.800 C18 8 20.500 5 22.300 1.800 Z" fill="#000"/><ellipse cx="19.600" cy="16.400" rx="2.500" ry="2.900" fill="none" stroke="#000" stroke-width="1.400" transform="rotate(-25 19.600 16.400)"/><path d="M16 11.500 L18.300 14" stroke="#000" stroke-width="1.600"/></svg>
<div class="vline" style="left:1433px;top:88px;height:72px;background:#b0b0b0"></div>
<div class="vdots" style="left:1438px;top:92px;height:64px"></div>
<!-- dock icons -->
<svg class="ic" style="left:1448px;top:113px" width="22" height="22" viewBox="0 0 22 22"><rect x="1" y="1.500" width="3.500" height="18.500" rx="0.800" fill="none" stroke="#a8a8a8" stroke-width="1.200"/><rect x="10" y="6.500" width="7" height="7.500" fill="none" stroke="#a8a8a8" stroke-width="1.200"/><path d="M4.500 10.500 H10" stroke="#a8a8a8" stroke-width="1.200"/><path d="M18 7 H20.500 M18 9 H20.500 M18 11 H20.500 M18 13 H20.500" stroke="#b8b8b8" stroke-width="0.800"/></svg>
<svg class="ic" style="left:1474px;top:113px" width="22" height="22" viewBox="0 0 22 22"><rect x="17.500" y="1.500" width="3.500" height="18.500" rx="0.800" fill="none" stroke="#a8a8a8" stroke-width="1.200"/><rect x="5" y="6.500" width="7" height="7.500" fill="none" stroke="#a8a8a8" stroke-width="1.200"/><path d="M12 10.500 H17.500" stroke="#a8a8a8" stroke-width="1.200"/><path d="M1.500 7 H4 M1.500 9 H4 M1.500 11 H4 M1.500 13 H4" stroke="#b8b8b8" stroke-width="0.800"/></svg>
<svg class="ic" style="left:1500px;top:113px" width="22" height="22" viewBox="0 0 22 22"><rect x="1.500" y="1" width="18.500" height="3.500" rx="0.800" fill="none" stroke="#a8a8a8" stroke-width="1.200"/><rect x="7" y="10" width="7.500" height="7.500" fill="none" stroke="#a8a8a8" stroke-width="1.200"/><path d="M10.800 4.500 V10" stroke="#a8a8a8" stroke-width="1.200"/><path d="M7.500 18.500 V21 M9.500 18.500 V21 M11.500 18.500 V21 M13.500 18.500 V21" stroke="#b8b8b8" stroke-width="0.800"/></svg>
<svg class="ic" style="left:1526px;top:113px" width="22" height="22" viewBox="0 0 22 22"><rect x="1.500" y="16.500" width="18.500" height="3.500" rx="0.800" fill="none" stroke="#a8a8a8" stroke-width="1.200"/><rect x="7" y="3.500" width="7.500" height="7.500" fill="none" stroke="#a8a8a8" stroke-width="1.200"/><path d="M10.800 11 V16.500" stroke="#a8a8a8" stroke-width="1.200"/><path d="M7.500 0 V2.500 M9.500 0 V2.500 M11.500 0 V2.500 M13.500 0 V2.500" stroke="#b8b8b8" stroke-width="0.800"/></svg>
<div class="tog on green" style="left:1561px;top:106px"><i></i></div><div class="t" style="left:1584px;top:103px">Move as group</div>
<div class="tog on green" style="left:1561px;top:133px"><i></i></div><div class="t" style="left:1584px;top:130px">Lock inner objects</div>
<div class="t" style="left:1711px;top:103px">Padding:</div>
<div class="abs" style="left:1710px;top:127px;width:52px;height:21px;background:#fff;border-bottom:1px solid #777;font-size:13px;line-height:20px;padding-left:8px">0.0</div><div class="spin" style="left:1747px;top:128px;height:19px;border-color:#ccc"><i></i></div>

<!-- lefttools.html -->
<div class="vline" style="left:68px;top:160px;height:802px;background:#adadad"></div>
<div class="hline" style="left:0;top:161px;width:68px;background:#fafafa"></div>
<div class="hline" style="left:0;top:961px;width:69px;background:#adadad"></div>
<div class="hdots" style="left:3px;top:166px;width:63px"></div>
<div class="abs" style="left:21px;top:173px;width:26px;height:23px;background:#cce4f7;border:1px solid #99ccf0;border-radius:2px"></div>
<!-- select arrow -->
<svg class="ic" style="left:23px;top:174px" width="22" height="22" viewBox="0 0 22 22"><path d="M6 2.500 L6 18 L10 14.500 L12.500 20.300 L15 19.200 L12.500 13.500 L17.500 13.200 Z" fill="#d6e9f8" stroke="#000" stroke-width="1.800" stroke-linejoin="miter"/></svg>
<!-- pencil -->
<svg class="ic" style="left:23px;top:198px" width="22" height="22" viewBox="0 0 22 22"><path d="M14.300 0.800 Q16 -0.200 17.800 1.200 Q19.300 2.800 18.300 4.600 L10 16.800 L6 14.200 Z" fill="#000"/><path d="M12.600 3.600 L16.600 6.300" stroke="#f0f0f0" stroke-width="0.900"/><path d="M5.500 15.300 L8.800 17.500 L4 20.500 Z" fill="#fff" stroke="#000" stroke-width="0.900"/><path d="M4 20.500 L4.600 18 L6 19.200 Z" fill="#000"/></svg>
<!-- rect -->
<svg class="ic" style="left:23px;top:222px" width="22" height="22" viewBox="0 0 22 22"><rect x="2" y="2" width="18" height="18" fill="none" stroke="#000" stroke-width="2.300"/></svg>
<!-- circle -->
<svg class="ic" style="left:23px;top:246px" width="22" height="22" viewBox="0 0 22 22"><circle cx="11" cy="11" r="9" fill="none" stroke="#000" stroke-width="2.300"/></svg>
<!-- hexagon -->
<svg class="ic" style="left:23px;top:270px" width="22" height="22" viewBox="0 0 22 22"><path d="M1.500 11 L6.300 2.800 H15.700 L20.500 11 L15.700 19.200 H6.300 Z" fill="none" stroke="#000" stroke-width="2.300" stroke-linejoin="round"/></svg>
<!-- polygon -->
<svg class="ic" style="left:23px;top:294px" width="22" height="22" viewBox="0 0 22 22"><path d="M2.500 5.500 L9.500 2 L16.500 4.500 L20.500 13 L14.500 19.500 L2.500 19 Z" fill="none" stroke="#000" stroke-width="1.700" stroke-linejoin="round"/><g fill="#000"><circle cx="2.500" cy="5.500" r="1.200"/><circle cx="9.500" cy="2" r="1.200"/><circle cx="16.500" cy="4.500" r="1.200"/><circle cx="20.500" cy="13" r="1.200"/><circle cx="14.500" cy="19.500" r="1.200"/><circle cx="2.500" cy="19" r="1.300"/></g></svg>
<!-- scissors -->
<svg class="ic" style="left:23px;top:318px" width="22" height="22" viewBox="0 0 22 22"><path d="M15 0.500 C15.500 4.500 13.500 8.500 11.800 11.600 L9 10 C10.800 7 13 3.200 15 0.500 Z" fill="#000"/><path d="M21.300 7.800 C18.500 11.300 14.300 12.600 10.300 12.800 L9.500 10.200 C14 10.200 17.800 9.300 21.300 7.800 Z" fill="#000"/><ellipse cx="4.500" cy="10" rx="2.700" ry="1.900" fill="none" stroke="#000" stroke-width="1.400"/><ellipse cx="10.800" cy="17.300" rx="1.800" ry="2.900" fill="none" stroke="#000" stroke-width="1.400"/><path d="M7.200 10.400 L10.500 11.200 L10.600 14.400" stroke="#000" stroke-width="1.400" fill="none"/></svg>
<!-- dashed rect w/ top line -->
<svg class="ic" style="left:23px;top:342px" width="22" height="22" viewBox="0 0 22 22"><path d="M2 1.700 H20" stroke="#000" stroke-width="1"/><path d="M2.700 6 V19.300 H9.300 M12.700 19.300 H19.300 V6" fill="none" stroke="#000" stroke-width="1.600"/></svg>
<!-- A -->
<div class="abs" style="left:23px;top:367px;width:22px;height:20px;font-family:'DejaVu Sans','Liberation Sans',sans-serif;font-weight:bold;font-size:18.500px;line-height:21px;text-align:center;color:#000">A</div>
<!-- pin -->
<svg class="ic" style="left:23px;top:390px" width="22" height="22" viewBox="0 0 22 22"><path d="M11 21.300 C8 16.500 3.800 13 3.800 8.300 C3.800 4 7.200 1.300 11 1.300 C14.800 1.300 18.200 4 18.200 8.300 C18.200 13 14 16.500 11 21.300 Z" fill="#000"/><circle cx="11" cy="8" r="3" fill="#f0f0f0"/></svg>
<!-- ruler -->
<svg class="ic" style="left:23px;top:414px" width="22" height="22" viewBox="0 0 22 22"><path d="M1.500 16.500 L17.500 2.500 L20.500 6 L4.500 20 Z" fill="#f0f0f0" stroke="#000" stroke-width="1.300" stroke-linejoin="round"/><path d="M5 14.800 L6.300 16.300 M7.500 12.600 L8.800 14.100 M10 10.400 L11.300 11.900 M12.500 8.200 L13.800 9.700 M15 6 L16.300 7.500" stroke="#000" stroke-width="1"/></svg>
<div class="hsep" style="left:0;top:439px;width:68px;background:#c0c0c0"></div>
<div class="hdots" style="left:3px;top:443px;width:63px"></div>
<!-- offset O -->
<svg class="ic" style="left:23px;top:452px" width="22" height="22" viewBox="0 0 22 22"><ellipse cx="11" cy="11" rx="8.800" ry="9.800" fill="none" stroke="#555" stroke-width="1.200"/><ellipse cx="11" cy="11" rx="6.600" ry="7.600" fill="none" stroke="#555" stroke-width="1.800"/><ellipse cx="11" cy="11" rx="4.200" ry="5.600" fill="none" stroke="#555" stroke-width="1.200"/></svg>
<div class="hsep" style="left:4px;top:478px;width:60px"></div>
<!-- boolean 1 -->
<svg class="ic" style="left:23px;top:483px" width="22" height="22" viewBox="0 0 22 22"><path d="M8.500 1.800 H20 V14 H17 V20.200 H5.500 V17 H2.500 V5 H8.500 Z" fill="none" stroke="#555" stroke-width="1.600"/><path d="M8.500 5 H17 V14 M8.500 5 V8 M5.500 17 V8 H14 V17 H5.500" fill="none" stroke="#777" stroke-width="0.900" stroke-dasharray="1.800 0.900"/></svg>
<!-- boolean 2 -->
<svg class="ic" style="left:23px;top:507px" width="22" height="22" viewBox="0 0 22 22"><path d="M1.800 1.800 H15.200 V6.500 H20.200 V20.200 H6.500 V15.200 H1.800 Z" fill="none" stroke="#555" stroke-width="1.800"/><path d="M6.500 6.500 H15.200 V15.200 H6.500 Z" fill="none" stroke="#666" stroke-width="0.900" stroke-dasharray="1.800 1"/></svg>
<!-- boolean 3 -->
<svg class="ic" style="left:23px;top:531px" width="22" height="22" viewBox="0 0 22 22"><path d="M6.800 7 H20.500 V20.500 H6.800 Z" fill="none" stroke="#666" stroke-width="0.900" stroke-dasharray="1.800 1"/><path d="M1.800 1.800 H15.200 V7 H6.800 V15.200 H1.800 Z" fill="#f0f0f0" stroke="#555" stroke-width="1.800"/></svg>
<!-- boolean 4 -->
<svg class="ic" style="left:23px;top:555px" width="22" height="22" viewBox="0 0 22 22"><path d="M1.500 1.500 H15.200 V15.200 H1.500 Z" fill="none" stroke="#666" stroke-width="0.900" stroke-dasharray="1.800 1"/><path d="M6.800 6.800 H20.500 V20.500 H6.800 Z" fill="none" stroke="#666" stroke-width="0.900" stroke-dasharray="1.800 1"/><path d="M6.800 6.800 H15.200 V15.200 H6.800 Z" fill="#f0f0f0" stroke="#555" stroke-width="1.800"/></svg>
<div class="hsep" style="left:4px;top:581px;width:60px"></div>
<!-- grid array -->
<svg class="ic" style="left:23px;top:586px" width="22" height="22" viewBox="0 0 22 22"><g fill="#555"><rect x="1" y="1" width="5" height="5"/><rect x="8.500" y="1" width="5" height="5"/><rect x="16" y="1" width="5" height="5"/><rect x="1" y="8.500" width="5" height="5"/><rect x="8.500" y="8.500" width="5" height="5"/><rect x="16" y="8.500" width="5" height="5"/><rect x="1" y="16" width="5" height="5"/><rect x="8.500" y="16" width="5" height="5"/><rect x="16" y="16" width="5" height="5"/></g></svg>
<!-- circular array -->
<svg class="ic" style="left:23px;top:610px" width="22" height="22" viewBox="0 0 22 22"><circle cx="11" cy="11.500" r="6.400" fill="none" stroke="#555" stroke-width="1.300"/><rect x="8.900" y="0.500" width="4.200" height="4.200" fill="#555"/><g fill="#f4f4f4" stroke="#555" stroke-width="1"><rect x="9.100" y="18" width="3.800" height="3.800"/><rect x="0.600" y="9.600" width="3.800" height="3.800"/><rect x="17.600" y="9.600" width="3.800" height="3.800"/><rect x="3.100" y="3.600" width="3.800" height="3.800" transform="rotate(45 5 5.500)"/><rect x="15.100" y="3.600" width="3.800" height="3.800" transform="rotate(45 17 5.500)"/><rect x="3.100" y="15.600" width="3.800" height="3.800" transform="rotate(45 5 17.500)"/><rect x="15.100" y="15.600" width="3.800" height="3.800" transform="rotate(45 17 17.500)"/></g></svg>
<div class="hsep" style="left:4px;top:636px;width:60px"></div>
<!-- polygon arrow -->
<svg class="ic" style="left:23px;top:642px" width="22" height="22" viewBox="0 0 22 22"><path d="M3 6.500 L10 2.500 L14.500 3.800 L20 12 L15 19.500 H3 Z" fill="none" stroke="#555" stroke-width="1.700" stroke-linejoin="round"/><path d="M8.500 2 L12.500 3.300" stroke="#000" stroke-width="1.600"/><path d="M15 4.300 L10.800 0.800 L10.600 5 Z" fill="#000"/><circle cx="3" cy="19.500" r="1.200" fill="#555"/><circle cx="15" cy="19.500" r="1.200" fill="#555"/></svg>
<!-- radius -->
<svg class="ic" style="left:23px;top:665px" width="22" height="22" viewBox="0 0 22 22"><path d="M1.500 20.500 V13 Q1.500 1.500 13 1.500 H20.500" fill="none" stroke="#000" stroke-width="1.800"/><path d="M20.500 1.500 V20.500 H1.500" fill="none" stroke="#000" stroke-width="1" stroke-dasharray="2 1.200"/></svg>
<div class="t" style="left:12px;top:689px">Radius:</div>
<div class="inp" style="left:1px;top:705px;width:64px;height:20px;line-height:18px;padding-left:12px;font-size:12px">10.0</div><div class="spin" style="left:51px;top:706px;height:18px"><i></i></div>

<!-- canvas.html -->
<div class="abs" style="left:69px;top:161px;width:1387px;height:799px;background:#f4f4f4"></div>
<div class="abs" style="left:72px;top:164px;width:1383px;height:795px;background:#f8f8f8;overflow:hidden">
<svg width="1383" height="795" viewBox="72 164 1383 795" style="position:absolute;left:0;top:0;font-family:'DejaVu Sans Condensed','Liberation Sans',sans-serif">
<path d="M582.5 180V943M591.5 180V943M601.5 180V943M610.5 180V943M620.5 180V943M629.5 180V943M639.5 180V943M649.5 180V943M658.5 180V943M668.5 180V943M677.5 180V943M687.5 180V943M696.5 180V943M706.5 180V943M715.5 180V943M725.5 180V943M734.5 180V943M744.5 180V943M754.5 180V943M763.5 180V943M773.5 180V943M782.5 180V943M792.5 180V943M801.5 180V943M811.5 180V943M820.5 180V943M830.5 180V943M839.5 180V943M849.5 180V943M859.5 180V943M868.5 180V943M878.5 180V943M887.5 180V943M897.5 180V943M906.5 180V943M916.5 180V943M925.5 180V943M935.5 180V943M944.5 180V943M573 933.5H954M573 924.5H954M573 914.5H954M573 905.5H954M573 895.5H954M573 886.5H954M573 876.5H954M573 867.5H954M573 857.5H954M573 847.5H954M573 838.5H954M573 828.5H954M573 819.5H954M573 809.5H954M573 800.5H954M573 790.5H954M573 781.5H954M573 771.5H954M573 762.5H954M573 752.5H954M573 742.5H954M573 733.5H954M573 723.5H954M573 714.5H954M573 704.5H954M573 695.5H954M573 685.5H954M573 676.5H954M573 666.5H954M573 657.5H954M573 647.5H954M573 637.5H954M573 628.5H954M573 618.5H954M573 609.5H954M573 599.5H954M573 590.5H954M573 580.5H954M573 571.5H954M573 561.5H954M573 552.5H954M573 542.5H954M573 532.5H954M573 523.5H954M573 513.5H954M573 504.5H954M573 494.5H954M573 485.5H954M573 475.5H954M573 466.5H954M573 456.5H954M573 447.5H954M573 437.5H954M573 427.5H954M573 418.5H954M573 408.5H954M573 399.5H954M573 389.5H954M573 380.5H954M573 370.5H954M573 361.5H954M573 351.5H954M573 342.5H954M573 332.5H954M573 322.5H954M573 313.5H954M573 303.5H954M573 294.5H954M573 284.5H954M573 275.5H954M573 265.5H954M573 256.5H954M573 246.5H954M573 237.5H954M573 227.5H954M573 217.5H954M573 208.5H954M573 198.5H954M573 189.5H954" stroke="#dcdcdc" stroke-width="1" fill="none" shape-rendering="crispEdges"/>
<rect x="572.550" y="179.600" width="382.050" height="763.600" fill="none" stroke="#000" stroke-width="1.250"/>
<path d="M617.9 204.1L589.4 204.1C588.4 204.5 587.2 204.5 586.5 205.2C585.7 206.1 585.6 207.5 585.1 208.6C585.4 212.2 585.7 215.8 585.9 219.4C586.6 229.3 587.1 239.1 587.9 249.0C588.4 256.0 589.2 263.0 589.9 270.0C590.1 273.3 590.5 276.6 590.5 279.9C590.8 289.7 590.8 299.6 590.8 309.4C590.9 316.0 590.8 322.5 590.6 329.1C590.4 339.0 590.1 348.8 589.9 358.7C589.6 369.0 589.3 379.3 589.1 389.6C588.8 402.7 588.5 415.8 588.4 429.0C588.3 432.6 588.5 436.3 588.4 440.0C588.2 446.6 587.9 453.1 587.7 459.7C587.4 467.9 586.9 476.1 587.1 484.3C587.1 486.8 587.5 489.4 588.4 491.7C589.0 493.3 590.3 494.5 591.3 496.0C623.4 493.2 655.4 490.7 687.4 487.8C698.6 486.8 709.7 485.5 720.9 484.3C720.4 483.5 720.1 482.5 719.4 481.9C718.3 480.8 716.7 480.4 715.5 479.4C714.4 478.5 713.1 477.7 712.5 476.4C711.8 475.0 712.2 473.1 711.5 471.5C711.0 470.2 710.1 469.0 709.1 468.1C707.6 466.7 705.6 466.0 704.1 464.6C702.0 462.5 700.1 460.1 698.2 457.7C696.8 456.0 695.3 454.3 694.3 452.3C693.2 450.2 693.0 447.6 691.8 445.4C691.3 444.4 690.4 443.5 689.4 443.0C687.8 442.3 685.6 443.1 684.4 442.0C683.4 441.0 684.4 439.1 683.9 437.8C683.7 437.2 682.8 436.9 682.5 436.4C681.3 434.6 680.6 432.7 679.5 430.9C678.1 428.6 676.1 426.6 675.1 424.0C673.9 421.2 673.5 418.2 673.1 415.2C672.7 412.2 672.5 409.3 672.6 406.3C672.7 403.5 672.9 400.7 673.6 397.9C673.9 396.5 675.2 395.4 675.6 394.0C676.0 392.6 675.5 391.0 676.1 389.6C676.6 388.2 678.3 387.5 678.5 386.1C679.1 382.4 678.6 378.5 678.3 374.8C678.1 372.1 677.8 369.5 677.0 366.9C676.4 364.5 674.9 362.4 674.1 360.0C673.1 357.3 672.4 354.5 671.6 351.8C670.8 348.8 669.7 345.9 669.2 342.9C668.8 341.0 669.2 339.0 669.2 337.0C669.1 334.4 668.9 331.7 668.7 329.1C668.4 326.1 668.2 323.2 667.7 320.2C667.2 317.9 666.7 315.5 665.7 313.4C664.7 310.9 662.9 308.9 661.8 306.4C660.6 303.9 659.6 301.3 658.8 298.6C658.1 296.0 658.2 293.2 657.3 290.7C656.5 288.1 655.1 285.7 653.9 283.3C652.6 280.8 650.8 278.5 649.8 275.9C649.1 274.3 649.8 272.2 649.0 270.6C648.0 268.9 645.3 268.5 644.5 266.7C643.9 265.2 644.8 263.4 645.0 261.8C645.3 259.9 646.6 258.2 646.2 256.4C645.9 254.8 643.9 254.2 643.0 252.9C642.3 251.7 641.8 250.4 641.6 249.0C641.3 247.0 641.5 245.0 641.6 243.1C641.7 241.1 642.3 239.1 642.3 237.1C642.3 235.8 642.0 234.5 641.6 233.2C641.0 231.5 640.3 229.7 639.1 228.3C638.1 227.1 636.4 226.8 635.2 225.8C633.9 224.8 632.5 223.8 631.7 222.4C630.9 220.9 631.1 219.1 630.7 217.4C630.3 215.8 630.4 213.8 629.3 212.5C628.5 211.6 626.8 212.2 625.8 211.5C624.4 210.5 623.6 208.8 622.4 207.6C621.0 206.3 619.4 205.3 617.9 204.1Z" fill="none" stroke="#ff0000" stroke-width="1.05" stroke-linejoin="round"/>
<path d="M607.9 204.6C608.4 205.6 608.7 206.8 609.6 207.6C610.8 208.7 612.4 209.4 614.0 210.1C615.2 210.6 616.9 210.2 617.9 211.0C619.5 212.3 620.5 214.2 621.4 216.0C622.7 218.6 623.6 221.5 624.3 224.3C625.1 227.2 625.3 230.2 625.8 233.2C626.3 236.0 627.0 238.8 627.1 241.6C627.1 243.1 626.2 244.5 626.3 246.0C626.6 248.7 627.3 251.4 628.3 253.9C628.8 255.3 629.7 256.7 630.7 257.8C632.3 259.5 634.6 260.5 636.2 262.3C638.1 264.5 639.5 267.2 641.1 269.7C644.4 274.7 648.2 279.4 650.9 284.8C652.2 287.2 652.4 290.0 652.9 292.7C653.5 295.9 653.3 299.3 654.1 302.5C654.7 304.9 655.8 307.2 656.9 309.4C658.7 313.4 661.2 317.1 662.6 321.2C663.4 323.7 663.2 326.5 663.2 329.1C663.2 332.4 662.5 335.7 662.6 339.0C662.6 341.0 663.1 343.0 663.7 344.9C665.1 348.9 667.0 352.8 668.7 356.7C669.1 357.8 669.7 358.9 670.1 360.0C671.2 362.6 672.4 365.2 673.1 367.9C673.9 371.1 674.2 374.4 674.4 377.7C674.6 381.0 674.9 384.4 674.4 387.6C674.0 389.7 672.7 391.6 671.6 393.5C670.8 395.1 669.3 396.3 668.7 397.9C667.9 400.0 667.7 402.2 667.7 404.3C667.6 407.9 668.0 411.6 668.2 415.2C668.3 417.8 668.1 420.5 668.7 423.1C669.1 425.1 670.2 427.1 671.1 429.0C672.3 431.3 674.0 433.4 675.1 435.9C676.2 438.4 676.8 441.1 677.5 443.7C678.1 445.8 678.4 447.8 679.0 449.9C679.8 452.5 680.3 455.2 681.5 457.7C682.6 460.2 684.2 462.5 685.9 464.6C687.2 466.3 689.1 467.4 690.3 469.1C691.3 470.4 692.2 471.9 692.3 473.5C692.5 475.8 692.1 478.2 691.3 480.4C690.4 483.0 688.7 485.3 687.4 487.8" fill="none" stroke="#0000ff" stroke-width="1.1" stroke-linejoin="round"/>
<path d="M635.5 199.7L775.3 187.2C776.5 188.7 778.1 190.0 778.8 191.8C779.7 194.3 779.8 197.1 780.2 199.7C780.2 203.0 780.3 206.3 780.2 209.6C780.0 219.4 779.5 229.3 779.3 239.1C779.1 249.4 779.3 259.7 779.1 270.0C778.8 286.4 778.1 302.8 777.8 319.3C777.5 332.8 777.4 346.4 777.3 360.0C777.2 373.1 776.8 386.3 777.1 399.4C777.3 409.3 778.2 419.1 778.8 429.0C779.0 432.6 779.1 436.3 779.3 440.0C779.4 443.3 779.5 446.6 779.8 449.9C780.1 454.8 780.8 459.7 781.2 464.6C781.5 467.6 781.7 470.5 781.9 473.5C781.5 474.6 781.5 476.0 780.7 476.9C779.9 478.1 778.4 478.6 777.3 479.4C768.1 479.1 758.9 478.9 749.7 478.6C746.8 478.5 743.9 478.4 741.0 478.2C740.8 478.7 740.8 479.7 740.3 479.6C739.7 479.5 739.7 478.5 739.4 477.9C737.9 477.3 736.5 476.4 734.9 476.0C733.3 475.5 731.7 475.1 730.0 475.0C727.0 474.8 723.9 475.3 720.9 475.0C718.7 474.8 716.4 474.5 714.5 473.5C713.4 472.9 712.7 471.7 712.5 470.5C712.1 468.3 712.6 465.9 712.5 463.6C712.4 460.7 712.3 457.7 711.8 454.8C711.5 452.4 710.3 450.2 710.0 447.9C709.8 445.8 710.4 443.8 710.5 441.8C710.7 438.2 710.8 434.5 711.0 430.9C711.3 427.6 711.6 424.4 712.0 421.1C712.4 417.8 713.4 414.5 713.5 411.2C713.6 408.9 713.3 406.5 712.5 404.3C711.5 401.5 709.6 399.1 708.1 396.4C706.8 394.1 705.3 392.0 704.1 389.6C703.0 387.0 702.4 384.2 701.2 381.7C699.6 378.3 697.3 375.3 695.8 371.8C694.9 370.0 694.5 367.9 694.3 365.9C694.0 363.8 694.7 361.7 694.3 359.7C693.9 357.6 692.3 355.8 692.1 353.7C691.7 349.8 692.7 345.9 692.5 341.9C692.4 338.9 692.0 335.9 691.3 333.1C690.3 329.0 688.6 325.2 687.4 321.2C686.4 318.0 685.2 314.7 684.6 311.4C684.2 308.8 684.2 306.1 684.4 303.5C684.6 301.2 685.0 298.8 685.9 296.6C686.7 294.6 688.5 293.1 689.4 291.2C689.6 290.7 688.9 290.2 688.9 289.7C688.7 287.4 688.7 285.1 688.9 282.8C689.0 280.5 689.7 278.2 689.9 275.9C689.9 274.2 689.9 272.4 689.6 270.6C689.1 268.3 688.3 266.0 687.4 263.7C686.3 261.0 685.1 258.3 683.5 255.9C682.4 254.3 681.2 252.8 679.5 251.9C677.4 250.9 674.9 251.1 672.6 250.4C670.6 249.8 668.4 249.2 666.7 248.0C665.4 247.0 664.6 245.5 663.7 244.0C662.3 241.5 661.3 238.7 659.8 236.2C658.7 234.4 657.5 232.6 655.9 231.2C654.5 230.1 652.6 229.5 650.9 228.8C649.0 227.9 646.9 227.3 645.0 226.3C643.6 225.5 642.1 224.6 641.1 223.3C639.4 221.3 638.1 218.9 637.1 216.4C636.2 213.9 635.6 211.2 635.4 208.6C635.1 205.6 635.4 202.7 635.5 199.7Z" fill="none" stroke="#ff0000" stroke-width="1.05" stroke-linejoin="round"/>
<path d="M646.5 198.5C647.3 199.4 648.0 200.4 649.0 201.2C650.3 202.3 652.2 202.8 653.4 204.1C654.5 205.4 654.9 207.0 655.4 208.6C655.7 209.7 655.3 211.0 655.9 212.0C656.5 213.4 657.7 214.5 658.8 215.5C660.3 216.8 662.3 217.5 663.7 218.9C665.6 220.7 667.0 222.9 668.7 224.8C669.6 226.0 670.9 227.0 671.6 228.3C673.0 230.8 673.7 233.6 675.1 236.2C675.7 237.3 676.5 238.3 677.5 239.1C678.7 240.0 680.1 240.7 681.5 241.1C682.0 241.2 682.6 240.2 683.0 240.6C683.6 241.2 683.5 242.2 683.5 243.1C683.5 243.9 682.6 244.7 683.0 245.5C683.7 247.2 685.3 248.4 686.4 249.9C687.8 251.9 689.2 253.8 690.3 255.9C691.6 258.1 692.9 260.3 693.8 262.8C694.4 264.6 694.6 266.7 694.8 268.7C695.0 271.4 695.2 274.2 695.1 276.9C695.0 279.5 694.8 282.2 694.3 284.8C693.9 287.0 693.1 289.1 692.3 291.2C691.5 293.4 690.1 295.3 689.6 297.6C689.0 299.8 688.9 302.2 688.9 304.5C688.8 307.1 688.8 309.8 689.4 312.4C690.3 316.4 692.0 320.2 693.3 324.2C694.8 328.8 696.7 333.3 697.7 338.0C698.5 341.5 698.5 345.2 698.7 348.8C698.9 351.1 698.8 353.4 699.0 355.7C699.1 357.2 699.5 358.6 699.7 360.0C699.9 361.6 699.7 363.4 700.2 364.9C701.2 367.7 702.9 370.2 704.1 372.8C705.5 375.7 707.1 378.6 708.1 381.7C709.0 384.5 709.1 387.6 710.0 390.5C710.8 392.9 711.9 395.2 713.0 397.4C714.5 400.5 716.5 403.3 717.9 406.3C718.3 407.1 718.5 407.9 718.4 408.8C718.3 409.6 717.4 410.4 717.4 411.2C717.5 412.2 718.2 413.1 718.9 413.7C719.7 414.4 721.1 414.4 721.9 415.2C722.5 415.8 722.7 416.8 722.7 417.6C722.7 419.5 722.1 421.2 721.9 423.1C721.7 424.7 720.9 426.4 721.4 428.0C721.9 429.6 723.9 430.5 724.8 431.9C725.6 433.1 726.4 434.4 726.6 435.9C726.9 437.8 726.5 439.8 726.3 441.8C726.2 443.5 725.7 445.2 725.8 446.9C726.0 448.9 726.2 451.1 727.3 452.8C728.3 454.4 730.3 455.1 731.7 456.3C733.1 457.4 734.9 458.2 735.7 459.7C736.6 461.5 736.3 463.7 736.6 465.6C736.9 467.3 736.6 469.2 737.6 470.5C739.2 472.4 741.8 473.1 743.8 474.5C745.8 475.9 747.7 477.4 749.7 478.9" fill="none" stroke="#0000ff" stroke-width="1.1" stroke-linejoin="round"/>
<path d="M781.2 203.7C781.5 202.3 781.4 200.9 782.0 199.7C782.4 198.9 783.3 198.5 784.0 197.9L862.5 191.3C863.8 193.1 865.7 194.7 866.5 196.8C867.4 199.2 867.1 202.0 867.4 204.6C867.3 212.8 867.1 221.1 867.0 229.3C866.6 242.8 866.3 256.4 866.0 270.0C865.5 286.4 865.0 302.8 864.5 319.3C864.0 332.8 863.4 346.4 863.0 360.0C862.7 369.9 862.5 379.7 862.5 389.6C862.5 399.4 862.6 409.3 863.0 419.1C863.3 426.1 864.2 433.0 864.8 440.0C865.2 444.9 865.5 449.8 865.8 454.8C866.1 460.7 866.1 466.6 866.5 472.5C866.5 472.9 867.0 473.1 867.0 473.5C867.0 476.0 867.3 478.6 866.5 480.9C866.0 482.1 864.5 482.5 863.5 483.4C862.8 482.4 862.5 481.0 861.5 480.4C860.2 479.6 858.6 479.6 857.1 479.2C855.1 478.7 853.0 478.8 851.2 477.9C849.7 477.2 848.5 475.9 847.7 474.5C846.6 472.4 846.2 469.9 845.8 467.6C845.3 465.2 845.9 462.6 845.3 460.2C844.6 457.6 842.9 455.3 841.8 452.8C840.6 450.2 839.3 447.7 838.4 444.9C837.6 442.6 837.4 440.2 836.9 437.8C836.4 435.2 836.4 432.4 835.4 429.9C834.3 427.1 832.4 424.5 830.5 422.1C829.1 420.2 827.0 419.0 825.6 417.1C823.4 414.3 821.5 411.3 819.7 408.3C818.2 405.7 816.7 403.2 815.7 400.4C814.9 398.2 814.6 395.8 814.5 393.5C814.4 390.5 815.0 387.6 814.9 384.6C814.9 382.0 815.0 379.3 814.2 376.8C813.3 373.6 811.2 370.9 809.8 367.9C809.1 366.5 808.3 365.1 807.8 363.6C807.1 361.4 806.5 359.0 806.4 356.7C806.2 353.7 806.5 350.8 806.9 347.8C807.2 344.9 807.8 341.9 808.3 339.0C808.8 336.3 809.7 333.8 809.8 331.1C809.9 327.8 808.8 324.5 808.8 321.2C808.8 318.3 809.3 315.3 809.8 312.4C810.2 310.0 811.0 307.8 811.3 305.5C811.5 303.5 811.5 301.5 811.3 299.6C811.0 296.6 810.6 293.6 809.8 290.7C809.3 288.9 808.6 287.1 807.3 285.8C805.9 284.1 803.5 283.4 801.9 281.8C800.4 280.4 799.1 278.7 798.0 276.9C796.8 274.9 795.8 272.8 795.0 270.6C793.9 267.4 793.3 264.1 792.6 260.8C791.8 257.5 791.2 254.2 790.6 250.9C790.0 247.7 790.1 244.3 789.1 241.1C788.6 239.2 787.1 237.8 786.2 236.2C785.3 234.5 784.1 233.0 783.7 231.2C783.0 228.0 783.4 224.7 783.2 221.4C782.9 217.8 782.6 214.1 782.2 210.5C782.0 208.2 781.6 205.9 781.2 203.7Z" fill="none" stroke="#ff0000" stroke-width="1.05" stroke-linejoin="round"/>
<path d="M793.5 196.9C794.5 197.7 796.2 198.0 796.5 199.2C797.0 201.3 795.6 203.5 795.8 205.6C796.1 208.3 797.6 210.8 798.0 213.5C798.5 216.8 797.9 220.1 798.5 223.3C798.8 225.1 799.7 226.7 800.4 228.3C801.7 231.1 803.5 233.7 804.4 236.7C805.0 239.0 804.1 241.7 804.9 244.0C805.5 245.7 807.6 246.4 808.3 248.0C809.6 250.8 809.9 253.9 810.8 256.9C811.7 259.8 812.3 263.0 813.7 265.7C814.9 268.0 817.0 269.7 818.7 271.6C819.3 272.4 820.0 273.1 820.6 273.9C821.7 275.4 823.1 276.7 823.6 278.4C824.2 280.4 824.3 282.7 824.1 284.8C823.8 286.8 822.1 288.6 822.1 290.7C822.1 293.4 823.9 295.9 824.1 298.6C824.2 300.6 823.3 302.5 823.1 304.5C822.9 306.8 823.2 309.1 823.1 311.4C823.0 313.7 822.4 316.0 822.6 318.3C822.8 320.6 823.7 322.9 824.1 325.2C824.3 326.5 824.6 327.8 824.4 329.1C824.1 330.5 823.0 331.7 822.6 333.1C821.8 335.6 821.1 338.3 820.6 340.9C820.2 343.5 820.1 346.2 819.7 348.8C819.2 351.5 818.3 354.0 818.2 356.7C818.1 357.8 819.0 358.9 819.2 360.0C819.4 361.6 818.7 363.4 819.2 364.9C819.9 367.4 821.7 369.4 822.6 371.8C823.6 374.4 824.5 377.0 825.1 379.7C825.5 381.6 825.0 383.7 825.4 385.6C825.7 387.6 826.6 389.5 827.0 391.5C827.4 393.2 827.4 394.9 828.0 396.4C828.9 398.9 830.2 401.1 831.5 403.4C832.7 405.4 834.4 407.1 835.4 409.3C836.3 411.1 836.1 413.3 836.9 415.2C838.1 417.9 839.8 420.4 841.3 423.1C842.6 425.4 844.3 427.5 845.3 429.9C846.1 432.1 846.4 434.5 846.8 436.9C846.9 437.9 846.5 439.0 846.8 440.0C847.5 442.4 848.8 444.6 849.7 446.9C850.6 449.2 851.2 451.6 852.2 453.8C852.8 455.2 854.0 456.3 854.6 457.7C855.3 459.3 855.3 461.2 856.1 462.7C856.8 463.9 858.0 464.7 859.1 465.6C860.1 466.5 861.3 467.3 862.5 468.1C863.3 468.6 864.3 468.9 865.0 469.6C865.8 470.4 866.2 471.5 866.8 472.5" fill="none" stroke="#0000ff" stroke-width="1.1" stroke-linejoin="round"/>
<path d="M683.5 507.0C683.8 506.0 683.8 504.8 684.6 504.0C685.6 503.1 687.1 503.1 688.4 502.6L854.1 488.1C855.3 489.3 856.9 490.2 857.6 491.7C858.7 494.0 858.7 496.6 859.3 499.1C859.3 502.4 859.3 505.7 859.3 509.0C859.1 526.0 858.8 543.0 858.6 560.0C858.3 580.0 858.1 600.0 857.8 620.0C857.5 638.3 857.3 656.7 857.0 675.0C856.8 685.0 856.6 695.0 856.5 705.0C856.5 708.3 856.4 711.5 856.5 714.8C856.8 721.4 857.2 727.9 857.7 734.5C858.2 741.1 858.9 747.6 859.5 754.2C860.0 759.1 860.5 764.0 861.0 769.0C860.8 771.6 861.4 774.4 860.5 776.9C860.0 778.3 858.2 778.8 857.0 779.8C833.2 779.5 809.4 779.4 785.6 778.8C777.6 778.6 769.5 777.8 761.5 777.3L761.9 777.5C761.5 776.5 761.4 775.4 760.9 774.5C760.1 773.0 758.7 771.7 757.9 770.1C757.2 768.5 756.9 766.8 756.5 765.2C756.0 763.5 755.0 761.9 755.2 760.2C755.5 757.8 756.8 755.6 757.9 753.4C758.7 751.8 760.1 750.5 760.9 748.9C761.9 746.9 763.1 744.8 763.4 742.5C763.6 739.9 762.7 737.2 762.4 734.6C762.1 732.8 762.2 730.9 761.4 729.2C760.6 727.6 758.4 726.9 757.9 725.3C757.6 724.4 759.0 723.7 759.4 722.8C759.8 721.9 760.6 720.9 760.4 719.9C760.1 718.0 758.6 716.6 757.9 714.9C757.1 712.9 756.6 710.8 756.0 708.7C755.1 706.0 754.2 703.4 753.5 700.8C752.9 698.5 752.4 696.2 752.0 693.9C751.7 691.6 751.8 689.3 751.5 687.0C751.3 685.3 750.8 683.7 750.5 682.1C750.3 680.4 750.0 678.8 750.0 677.1C750.0 674.8 750.8 672.5 750.5 670.2C750.5 669.7 749.3 669.8 749.1 669.3C748.6 668.4 748.9 667.3 748.6 666.3C748.2 665.3 747.4 664.4 747.1 663.4C746.4 661.4 746.3 659.3 745.6 657.4C745.0 655.7 744.5 653.8 743.1 652.5C742.2 651.6 740.4 652.2 739.2 651.5C737.6 650.5 736.7 648.8 735.3 647.6C734.0 646.5 732.8 645.3 731.3 644.6C728.8 643.6 726.1 643.4 723.5 642.7C721.1 642.0 718.7 641.7 716.5 640.7C715.1 640.0 714.0 638.6 712.6 637.7C711.4 637.0 709.9 636.6 708.7 635.8C706.9 634.6 705.1 633.5 703.7 631.8C702.2 629.9 701.8 627.3 700.3 625.4C699.1 624.0 697.6 622.7 695.9 622.0C693.9 621.2 691.6 621.3 689.5 621.0L689.4 621.1C688.6 614.7 687.9 608.3 687.1 601.9C686.3 595.7 685.2 589.5 684.6 583.2C684.2 578.6 684.3 574.0 684.1 569.4C683.9 561.2 683.6 553.0 683.5 544.8C683.4 539.9 683.5 534.9 683.5 530.0C683.5 522.3 683.5 514.7 683.5 507.0Z" fill="none" stroke="#ff0000" stroke-width="1.05" stroke-linejoin="round"/>
<path d="M683.5 544.3C684.3 546.6 685.1 548.9 686.1 551.2C687.1 553.4 688.2 555.6 689.6 557.6C691.3 560.1 693.4 562.3 695.5 564.5C698.3 567.5 701.3 570.4 704.3 573.4C707.6 576.5 710.7 579.9 714.2 582.7C715.6 583.9 717.5 584.3 719.1 585.2C721.1 586.3 723.5 586.9 725.0 588.6C726.6 590.4 727.1 592.9 728.0 595.0C729.0 597.5 729.7 600.1 730.9 602.4C732.0 604.4 733.3 606.2 734.9 607.8C736.6 609.7 738.7 611.3 740.8 612.8C742.3 613.8 744.2 614.2 745.7 615.2C747.0 616.0 748.3 616.9 749.2 618.2C750.2 619.8 750.4 621.8 751.1 623.6C751.5 624.4 752.0 625.1 752.5 625.9C754.1 628.5 756.0 631.1 757.4 633.8C758.6 636.0 759.8 638.3 760.4 640.7C761.1 643.6 761.2 646.6 761.4 649.6C761.5 652.5 761.3 655.5 761.4 658.4C761.4 661.4 761.9 664.3 761.7 667.3C761.4 670.3 760.4 673.2 759.9 676.2C759.4 679.1 758.9 682.0 758.9 685.0C758.9 687.3 759.3 689.7 759.9 691.9C760.6 694.3 761.9 696.5 762.9 698.8C763.8 701.1 765.1 703.3 765.6 705.7C766.2 708.3 766.1 711.0 766.3 713.6C766.4 714.7 766.7 715.8 766.6 716.9C766.4 718.6 766.0 720.3 765.3 721.8C764.6 723.6 762.8 724.9 762.4 726.8C761.9 729.0 762.3 731.4 762.9 733.6C763.3 735.7 764.9 737.5 765.3 739.6C765.8 742.1 765.8 744.9 765.3 747.4C764.9 749.5 763.5 751.3 762.9 753.4C762.2 755.3 761.5 757.2 761.4 759.3C761.3 761.3 761.8 763.2 762.4 765.2C762.8 766.9 763.3 768.7 764.3 770.1C765.5 771.6 767.1 772.7 768.8 773.5C770.6 774.5 772.7 774.8 774.7 775.5C778.3 776.8 782.0 778.0 785.6 779.3" fill="none" stroke="#0000ff" stroke-width="1.1" stroke-linejoin="round"/>
<path d="M624.1 646.6C624.7 645.4 624.9 643.8 625.9 642.9C626.8 642.0 628.2 642.1 629.4 641.7L699.8 642.7C701.1 643.2 702.4 643.7 703.7 644.1C706.0 644.9 708.4 645.4 710.6 646.1C712.8 646.8 715.1 647.4 717.0 648.6C718.7 649.6 720.3 650.9 721.5 652.5C722.5 653.9 723.0 655.7 723.5 657.4C723.9 659.4 724.4 661.4 724.2 663.4C724.1 665.4 723.0 667.3 722.5 669.3C721.8 671.6 720.8 673.8 720.5 676.2C720.2 678.4 720.1 680.8 720.5 683.0C720.8 685.1 722.0 686.9 722.5 689.0C722.8 690.4 723.3 691.9 723.0 693.4C722.6 695.3 721.2 697.0 720.5 698.8C719.9 700.4 719.2 702.0 719.0 703.7C718.8 706.0 719.0 708.4 719.3 710.6C719.5 712.4 719.9 714.2 720.5 715.9C721.5 718.9 722.9 721.8 723.9 724.8C724.9 727.4 725.8 730.0 726.4 732.7C726.8 734.6 727.0 736.6 726.9 738.6C726.7 741.2 726.0 743.8 725.4 746.5C724.9 748.8 723.6 751.0 723.5 753.4C723.3 755.3 724.2 757.3 724.4 759.3C724.6 761.2 724.7 763.2 724.6 765.2C724.6 767.8 724.2 770.4 724.2 773.0C724.3 775.7 724.2 778.4 724.9 780.9C725.6 783.4 727.2 785.6 728.4 787.8C729.8 790.5 731.5 793.0 732.8 795.7C733.5 797.1 733.9 798.6 734.4 800.0C734.9 801.3 734.9 802.9 735.9 803.9C737.2 805.3 739.1 805.9 740.8 806.9C742.4 807.9 744.2 808.7 745.7 809.9C747.5 811.2 749.2 812.6 750.6 814.3C752.2 816.2 753.5 818.4 754.6 820.7C756.0 823.5 756.6 826.7 758.0 829.6C758.9 831.2 760.0 832.8 761.5 834.0C763.2 835.4 765.5 835.9 767.4 837.0C769.4 838.0 771.5 838.9 773.3 840.4C776.2 842.7 778.6 845.7 781.2 848.3C784.5 851.6 788.0 854.6 791.0 858.1C793.6 861.2 795.9 864.5 797.9 868.0C799.6 870.8 800.6 873.9 801.9 876.9C801.9 880.8 801.9 884.7 801.9 888.7C801.9 894.5 801.9 900.4 801.9 906.3C801.8 909.3 801.7 912.2 801.7 915.2C800.9 916.0 800.4 917.1 799.4 917.6C798.1 918.4 796.5 918.6 795.0 919.1L630.2 933.4C629.2 931.9 627.8 930.7 627.1 929.0C626.3 927.1 626.4 925.0 626.1 923.0C626.2 911.9 626.1 900.7 626.3 889.6C626.5 879.7 627.1 869.9 627.3 860.0C627.8 836.3 628.2 812.5 628.7 788.8C628.9 779.0 629.2 769.1 629.4 759.3C629.5 749.4 629.5 739.6 629.4 729.7C629.3 723.1 629.0 716.6 628.7 710.0C628.5 706.3 628.2 702.5 627.9 698.8C626.9 685.7 625.9 672.5 624.9 659.4C624.6 655.1 624.4 650.9 624.1 646.6Z" fill="none" stroke="#ff0000" stroke-width="1.05" stroke-linejoin="round"/>
<path d="M687.0 643.1C689.0 643.6 691.0 643.9 692.9 644.6C694.6 645.3 696.3 646.2 697.8 647.1C699.0 647.8 700.7 648.3 701.3 649.6C701.6 650.3 700.0 650.7 699.8 651.5C699.6 652.3 699.7 653.4 700.3 654.0C701.5 655.1 703.3 655.2 704.7 656.0C706.0 656.7 707.3 657.3 708.2 658.4C709.0 659.5 709.3 661.0 709.5 662.4C709.6 663.7 709.3 665.0 709.2 666.3C708.9 668.0 708.2 669.6 708.2 671.2C708.2 671.6 709.2 671.4 709.2 671.7C709.0 673.6 707.9 675.3 707.7 677.1C707.4 679.4 707.5 681.7 707.5 684.0C707.5 687.3 708.1 690.6 707.9 693.9C707.7 696.9 706.9 699.8 706.5 702.8C706.2 705.1 705.5 707.4 705.7 709.7C705.9 712.2 706.8 714.6 707.7 716.9C708.8 719.6 710.4 722.1 711.6 724.8C712.8 727.4 714.2 729.9 715.1 732.7C715.7 734.6 715.7 736.6 716.1 738.6C716.5 740.7 717.3 742.8 717.5 745.0C717.8 747.4 717.5 749.9 717.5 752.4C717.6 754.7 717.8 757.0 718.0 759.3C718.3 761.6 718.9 763.8 719.0 766.2C719.2 768.8 718.7 771.4 718.8 774.0C719.0 776.7 719.4 779.3 720.0 781.9C720.6 784.6 721.5 787.2 722.5 789.8C723.3 792.1 724.5 794.4 725.4 796.7C725.8 797.8 726.1 798.9 726.5 800.0C727.4 802.5 728.6 804.9 729.5 807.4C729.9 808.5 730.2 809.7 730.4 810.8C730.7 812.1 730.4 813.6 731.1 814.8C732.0 816.2 733.7 817.0 734.9 818.2C736.1 819.5 737.5 820.6 738.3 822.2C739.0 823.3 739.3 824.8 739.3 826.1C739.3 827.9 738.4 829.7 738.3 831.5C738.3 832.9 738.8 834.1 738.8 835.5C738.8 837.8 738.0 840.1 738.3 842.4C738.7 844.5 739.5 846.6 740.8 848.3C741.9 849.7 743.7 850.4 745.2 851.2C747.6 852.5 750.3 853.2 752.6 854.7C754.8 856.0 756.5 858.0 758.5 859.6C760.1 860.8 762.1 861.6 763.5 863.0C765.0 864.8 765.5 867.2 766.9 869.0C768.4 870.9 770.4 872.4 772.3 873.9C773.7 874.9 775.5 875.2 776.8 876.4C778.5 877.9 780.0 879.8 781.2 881.8C782.5 883.9 783.1 886.4 784.1 888.7C784.9 890.3 785.3 892.3 786.6 893.6C787.8 894.8 789.7 895.0 791.0 896.1C794.9 899.2 798.3 902.9 801.9 906.3" fill="none" stroke="#0000ff" stroke-width="1.1" stroke-linejoin="round"/>
<g font-size="15.9" fill="#808080" text-anchor="middle"><text x="114.1" y="185">-480</text><text x="114.1" y="950.500">-480</text><text x="190.5" y="185">-400</text><text x="190.5" y="950.500">-400</text><text x="266.9" y="185">-320</text><text x="266.9" y="950.500">-320</text><text x="343.3" y="185">-240</text><text x="343.3" y="950.500">-240</text><text x="419.7" y="185">-160</text><text x="419.7" y="950.500">-160</text><text x="496.1" y="185">-80</text><text x="496.1" y="950.500">-80</text><text x="572.5" y="185">0</text><text x="572.5" y="950.500">0</text><text x="648.9" y="185">80</text><text x="648.9" y="950.500">80</text><text x="725.3" y="185">160</text><text x="725.3" y="950.500">160</text><text x="801.7" y="185">240</text><text x="801.7" y="950.500">240</text><text x="878.1" y="185">320</text><text x="878.1" y="950.500">320</text><text x="954.5" y="185">400</text><text x="954.5" y="950.500">400</text><text x="1030.9" y="185">480</text><text x="1030.9" y="950.500">480</text><text x="1107.3" y="185">560</text><text x="1107.3" y="950.500">560</text><text x="1183.7" y="185">640</text><text x="1183.7" y="950.500">640</text><text x="1260.1" y="185">720</text><text x="1260.1" y="950.500">720</text><text x="1336.5" y="185">800</text><text x="1336.5" y="950.500">800</text><text x="1412.9" y="185">880</text><text x="1412.9" y="950.500">880</text></g>
<g font-size="15.9" fill="#808080"><text x="76" y="950.7">0</text><text x="76" y="873.4">80</text><text x="76" y="797.0">160</text><text x="76" y="720.7">240</text><text x="76" y="644.3">320</text><text x="76" y="568.0">400</text><text x="76" y="491.7">480</text><text x="76" y="415.3">560</text><text x="76" y="339.0">640</text><text x="76" y="262.6">720</text><text x="76" y="185.7">800</text></g>
<g font-size="15.9" fill="#808080" text-anchor="end"><text x="1451" y="950.7">0</text><text x="1451" y="873.4">80</text><text x="1451" y="797.0">160</text><text x="1451" y="720.7">240</text><text x="1451" y="644.3">320</text><text x="1451" y="568.0">400</text><text x="1451" y="491.7">480</text><text x="1451" y="415.3">560</text><text x="1451" y="339.0">640</text><text x="1451" y="262.6">720</text><text x="1451" y="185.7">800</text></g>
<rect x="572" y="937" width="7" height="6.500" fill="#8c1818"/>
<rect x="568" y="938.500" width="9" height="8.500" rx="1" fill="#3f9e45"/><rect x="569.500" y="940" width="6" height="5.500" fill="#62d274"/><path d="M572.800 939 V943 H576" stroke="#2c7a2c" stroke-width="1" fill="none"/>
<text x="564" y="918" font-size="12.500" fill="#6a3030">Y</text><text x="597.500" y="953" font-size="12.500" fill="#6a3030">X</text>
</svg></div>
<!-- console.html -->

<div class="ptitle" style="top:161px">Console
<svg style="left:408px" width="46" height="25" viewBox="0 0 46 25"><path d="M5.500 8.500 H12.500 V12 M5.500 8.500 V11" fill="none" stroke="#2b1c1c" stroke-width="1.300"/><path d="M5 9.500 H13" stroke="#2b1c1c" stroke-width="2"/><rect x="2.500" y="12" width="7" height="5.500" fill="none" stroke="#2b1c1c" stroke-width="1.300"/><path d="M2 12.500 H10" stroke="#2b1c1c" stroke-width="2"/><path d="M30 8.500 L37.500 16.500 M37.500 8.500 L30 16.500" stroke="#2b1c1c" stroke-width="1.900"/></svg>
</div>
<div class="abs" style="left:1466px;top:190px;width:430px;height:201px;background:#fff;overflow:hidden;font-size:12.600px;line-height:16px;padding:1px 0 0 4px;white-space:nowrap;color:#000">
<div>Starting stream</div>
<div style="color:#a31515">ALARM:2</div>
<div style="color:#a31515">G-code motion target exceeds machine travel. Machine position safely</div>
<div style="color:#a31515">retained. Alarm may be unlocked. (Right-click the 'Devices' button to</div>
<div style="color:#a31515">reset the connection)</div>
<div style="color:#a31515">On or near line 0:</div>
<div>Stream completed in 0:00</div>
<div>[MSG:Reset to continue]</div>
<div>ok</div>
<div>Ortur Laser Master 2 Pro S2 Ready!</div>
<div>OLF:OLF 190.</div>
<div>OLH:OLM_ESP_PRO_V1.2.</div>
<div>OLM:GENERAL.</div>
</div>
<div class="hline" style="left:1466px;top:391px;width:449px;background:#808080"></div>
<div class="abs" style="left:1896px;top:190px;width:19px;height:201px;background:#ededed"></div>
<div class="abs" style="left:1903px;top:297px;width:6px;height:48px;background:#878787"></div>
<div class="abs" style="left:1466px;top:395px;width:359px;height:23px;background:#fbfbfb;border-bottom:1px solid #777;font-size:12.600px;line-height:24px;padding-left:3px;color:#8a8a8a">(type commands here)</div>
<div class="t" style="left:1845px;top:399px;font-size:12.600px">Show all</div>
<div class="tog off red" style="left:1901px;top:401px;width:18px"><i></i></div>
<div class="btn" style="left:1466px;top:421px;width:146px;height:26px;line-height:24px;font-size:12.600px">Macro0</div>
<div class="btn" style="left:1617px;top:421px;width:146px;height:26px;line-height:24px;font-size:12.600px">Macro1</div>
<div class="btn" style="left:1768px;top:421px;width:147px;height:26px;line-height:24px;font-size:12.600px">Macro2</div>
<div class="btn" style="left:1466px;top:451px;width:146px;height:26px;line-height:24px;font-size:12.600px">Macro3</div>
<div class="btn" style="left:1617px;top:451px;width:146px;height:26px;line-height:24px;font-size:12.600px">Macro4</div>
<div class="btn" style="left:1768px;top:451px;width:147px;height:26px;line-height:24px;font-size:12.600px">Macro5</div>
<!-- tabs -->
<div class="hline" style="left:1463px;top:480px;width:454px;background:#c4c4c4"></div>
<div class="tab" style="left:1466px;top:481px;width:100px;height:21px;line-height:20px;border:1px solid #e4e4e4;border-top:0;background:#f0f0f0">Cuts / Layers</div>
<div class="tab" style="left:1567px;top:480px;width:77px;height:24px;line-height:24px;border:1px solid #e0e0e0;border-top:0;background:#f7f7f7">Console</div>
<div class="tab" style="left:1644px;top:481px;width:119px;height:21px;line-height:20px;border:1px solid #e4e4e4;border-top:0;border-left:0;background:#f0f0f0">Camera Control</div>
<div class="tab" style="left:1763px;top:481px;width:102px;height:21px;line-height:20px;border:1px solid #e4e4e4;border-top:0;border-left:0;background:#f0f0f0">Variable Text</div>

<!-- laser.html -->
<div class="ptitle" style="top:509px;height:26px;line-height:26px;letter-spacing:-0.45px">Laser
<svg style="left:408px" width="46" height="25" viewBox="0 0 46 25"><path d="M5.500 8.500 H12.500 V12 M5.500 8.500 V11" fill="none" stroke="#2b1c1c" stroke-width="1.300"/><path d="M5 9.500 H13" stroke="#2b1c1c" stroke-width="2"/><rect x="2.500" y="12" width="7" height="5.500" fill="none" stroke="#2b1c1c" stroke-width="1.300"/><path d="M2 12.500 H10" stroke="#2b1c1c" stroke-width="2"/><path d="M30 8.500 L37.500 16.500 M37.500 8.500 L30 16.500" stroke="#2b1c1c" stroke-width="1.900"/></svg>
</div>
<div class="t" style="left:1464px;top:538px;font-size:12.600px">Ready</div>
<!-- Pause / Stop / Start -->
<div class="btn" style="left:1465px;top:557px;width:147px;height:58px"></div>
<div class="abs" style="left:1510px;top:576px;width:6px;height:20px;background:#000;border-radius:1px"></div><div class="abs" style="left:1521px;top:576px;width:6px;height:20px;background:#000;border-radius:1px"></div>
<div class="t" style="left:1531px;top:579px;font-size:12.600px">Pause</div>
<div class="btn" style="left:1617px;top:557px;width:148px;height:58px"></div>
<div class="abs" style="left:1666px;top:576px;width:20px;height:20px;background:#000;border-radius:1px"></div>
<div class="t" style="left:1688px;top:579px;font-size:12.600px">Stop</div>
<div class="btn" style="left:1770px;top:557px;width:146px;height:58px"></div>
<svg class="ic" style="left:1818px;top:576px" width="18" height="21" viewBox="0 0 18 21"><path d="M1 1.500 Q1 0.300 2 0.900 L17 9.700 Q18 10.300 17 10.900 L2 20 Q1 20.600 1 19.500 Z" fill="#000"/></svg>
<div class="t" style="left:1839px;top:579px;font-size:12.600px">Start</div>
<!-- Frame row -->
<div class="btn" style="left:1465px;top:618px;width:109px;height:58px"></div>
<svg class="ic" style="left:1489px;top:637px" width="20" height="20" viewBox="0 0 20 20"><path d="M1.500 8.700 V1.500 H8.700 M11.300 1.500 H18.500 V8.700 M18.500 11.300 V18.500 H11.300 M8.700 18.500 H1.500 V11.300" fill="none" stroke="#000" stroke-width="3" stroke-linejoin="round"/></svg>
<div class="t" style="left:1511px;top:640px;font-size:12.600px">Frame</div>
<div class="btn" style="left:1579px;top:618px;width:110px;height:58px"></div>
<svg class="ic" style="left:1603px;top:637px" width="20" height="20" viewBox="0 0 20 20"><circle cx="10" cy="10" r="8.600" fill="none" stroke="#000" stroke-width="2.600" stroke-dasharray="5.300 1.454" stroke-dashoffset="2.650"/></svg>
<div class="t" style="left:1625px;top:640px;font-size:12.600px">Frame</div>
<div class="btn" style="left:1694px;top:618px;width:109px;height:58px;line-height:57px;font-size:12.600px">Save GCode</div>
<div class="btn" style="left:1808px;top:618px;width:108px;height:58px;line-height:57px;font-size:12.600px">Run GCode</div>
<!-- Home row -->
<div class="btn" style="left:1465px;top:679px;width:102px;height:27px"></div>
<svg class="ic" style="left:1487px;top:683px" width="20" height="18" viewBox="0 0 20 18"><path d="M1 8.500 L10 1.600 L19 8.500" fill="none" stroke="#000" stroke-width="2.600" stroke-linecap="round" stroke-linejoin="miter"/><path d="M2.600 0.600 H4.700 V5.500 L2.600 7.200 Z" fill="#000"/><path d="M4 8 V16.200 H16 V8" fill="none" stroke="#000" stroke-width="2.800" stroke-linejoin="round"/><rect x="8" y="9.800" width="4.200" height="6" fill="#000"/></svg>
<div class="t" style="left:1509px;top:686px;font-size:12.600px">Home</div>
<div class="btn" style="left:1576px;top:679px;width:102px;height:26px;line-height:25px;font-size:12.600px">Go to Origin</div>
<div class="t" style="left:1725px;top:686px;font-size:12.600px">Start From:</div>
<div class="abs" style="left:1795px;top:681px;width:121px;height:22px;background:#fdfdfd;border:1px solid #d4d4d4;border-radius:3px;font-size:12.600px;line-height:20px;padding-left:3px;color:#143c14;white-space:nowrap">Absolute Coords</div><div class="chev" style="left:1902px;top:686px;border-color:#444"></div>
<!-- Job Origin -->
<div class="t" style="left:1734px;top:727px;font-size:12.600px">Job Origin</div>
<div class="abs" style="left:1797px;top:708px;width:118px;height:52px;border:1px solid #dcdcdc;background:#eeeeee"></div>
<div class="radio r16None" style="left:1798px;top:709px"></div><div class="radio r16None" style="left:1837px;top:709px"></div><div class="radio r16 sel" style="left:1876px;top:709px"></div>
<div class="radio r16None" style="left:1798px;top:726px"></div><div class="radio r16None" style="left:1837px;top:726px"></div><div class="radio r16None" style="left:1876px;top:726px"></div>
<div class="radio r16None" style="left:1798px;top:743px"></div><div class="radio r16None" style="left:1837px;top:743px"></div><div class="radio r16None" style="left:1876px;top:743px"></div>
<!-- toggles -->
<div class="tog off red" style="left:1464px;top:746px"><i></i></div><div class="t" style="left:1487px;top:744px;font-size:12.600px">Cut Selected Graphics</div>
<div class="tog off" style="left:1464px;top:770px"><i></i></div><div class="t" style="left:1487px;top:768px;font-size:12.600px;color:#787878">Use Selection Origin</div>
<div class="tog on green" style="left:1464px;top:799px"><i></i></div><div class="t" style="left:1487px;top:797px;font-size:12.600px">Optimize Cut Path</div>
<div class="btn" style="left:1686px;top:762px;width:230px;height:27px"></div>
<svg class="ic" style="left:1736px;top:765px" width="20" height="20" viewBox="0 0 20 20"><path d="M0.900 10 H4.400 M15.400 10 H19.300 M10 1 V4.500 M10 15.500 V19.300" stroke="#000" stroke-width="2.200"/><path d="M6.400 10 H13.400 M10 6.500 V13.500" stroke="#f00000" stroke-width="2.200"/></svg>
<div class="t" style="left:1758px;top:769px;font-size:12.600px">Show Last Position</div>
<div class="btn" style="left:1686px;top:791px;width:230px;height:26px;line-height:25px;font-size:12.600px">Optimization Settings</div>
<div class="btn" style="left:1465px;top:820px;width:91px;height:26px;line-height:25px;font-size:12.600px">Devices</div>
<div class="abs" style="left:1563px;top:823px;width:174px;height:22px;background:#fcfcfc;border:1px solid #d8d8d8;font-size:12.600px;line-height:20px;padding-left:3px;white-space:nowrap">(Auto)</div><div class="chev" style="left:1722px;top:828px;border-color:#444"></div>
<div class="abs" style="left:1744px;top:823px;width:172px;height:22px;background:#fcfcfc;border:1px solid #d8d8d8;font-size:12.600px;line-height:20px;padding-left:23px;white-space:nowrap">Ortur LM2 Pro Juanes</div><div class="chev" style="left:1902px;top:828px;border-color:#444"></div>
<div class="abs" style="left:1748px;top:826px;font-size:8.500px;line-height:10px;font-weight:bold;letter-spacing:-0.400px;color:#222">grbl</div>

<!-- bottom.html -->
<!-- bottom tabs of laser dock -->
<div class="hline" style="left:1525px;top:938px;width:392px;background:#b8b8b8"></div>
<div class="tab" style="left:1464px;top:938px;width:62px;height:24px;line-height:24px;border:1px solid #e2e2e2;border-top:0;background:#f6f6f6">Laser</div>
<div class="tab" style="left:1526px;top:939px;width:115px;height:21px;line-height:20px;border:1px solid #e6e6e6;border-top:0;border-left:0;background:#f0f0f0">Material Library</div>
<div class="hline" style="left:0;top:962px;width:1917px;background:#fbfbfb"></div>
<div class="vdots" style="left:3px;top:966px;height:25px"></div>
<div class="abs" style="left:11px;top:964px;width:26px;height:28px;background:#cce4f7;border:1px solid #90c8f0;border-radius:3px"></div>
<div class="sw" style="left:14px;top:968px;background:#000000;color:#fff">00</div>
<div class="sw" style="left:39px;background:#0000FF;color:#fff">01</div>
<div class="sw" style="left:65px;background:#FF0000;color:#fff">02</div>
<div class="sw" style="left:91px;background:#00E000;color:#000">03</div>
<div class="sw" style="left:117px;background:#D0D000;color:#000">04</div>
<div class="sw" style="left:143px;background:#FF8000;color:#000">05</div>
<div class="sw" style="left:169px;background:#00E0E0;color:#000">06</div>
<div class="sw" style="left:195px;background:#FF00FF;color:#fff">07</div>
<div class="sw" style="left:221px;background:#B4B4B4;color:#000">08</div>
<div class="sw" style="left:247px;background:#0000A0;color:#fff">09</div>
<div class="sw" style="left:273px;background:#A00000;color:#fff">10</div>
<div class="sw" style="left:299px;background:#00A000;color:#fff">11</div>
<div class="sw" style="left:325px;background:#A0A000;color:#000">12</div>
<div class="sw" style="left:351px;background:#C08000;color:#000">13</div>
<div class="sw" style="left:377px;background:#00A0FF;color:#fff">14</div>
<div class="sw" style="left:403px;background:#A000A0;color:#fff">15</div>
<div class="sw" style="left:429px;background:#808080;color:#fff">16</div>
<div class="sw" style="left:455px;background:#7D87B9;color:#000">17</div>
<div class="sw" style="left:481px;background:#BB7784;color:#000">18</div>
<div class="sw" style="left:507px;background:#4A6FE3;color:#fff">19</div>
<div class="sw" style="left:533px;background:#D33F6A;color:#fff">20</div>
<div class="sw" style="left:559px;background:#8CD78C;color:#000">21</div>
<div class="sw" style="left:585px;background:#F0B98D;color:#000">22</div>
<div class="sw" style="left:611px;background:#F6C4E1;color:#000">23</div>
<div class="sw" style="left:637px;background:#FA9ED4;color:#000">24</div>
<div class="sw" style="left:663px;background:#500A78;color:#fff">25</div>
<div class="sw" style="left:689px;background:#B45A00;color:#fff">26</div>
<div class="sw" style="left:715px;background:#004754;color:#fff">27</div>
<div class="sw" style="left:741px;background:#86FA88;color:#000">28</div>
<div class="sw" style="left:767px;background:#FFDB66;color:#000">29</div>
<div class="sep" style="left:794px;top:968px;height:22px"></div>
<div class="sw" style="left:800px;background:#F36926;color:#000">T1</div>
<div class="sw" style="left:826px;background:#0C96D9;color:#fff">T2</div>
<div class="tog on green" style="left:1px;top:1003px"><i></i></div><div class="t" style="left:24px;top:1001px">Move</div>
<div class="sep" style="left:63px;top:997px;height:18px"></div>
<div class="tog on green" style="left:68px;top:1003px"><i></i></div><div class="t" style="left:91px;top:1001px">Size</div>
<div class="sep" style="left:124px;top:997px;height:18px"></div>
<div class="tog on green" style="left:129px;top:1003px"><i></i></div><div class="t" style="left:152px;top:1001px">Rotate</div>
<div class="sep" style="left:198px;top:997px;height:18px"></div>
<div class="tog on green" style="left:203px;top:1003px"><i></i></div><div class="t" style="left:226px;top:1001px">Shear</div>
<div class="sep" style="left:281px;top:997px;height:18px"></div>
<div class="t" style="left:286px;top:1001px">x: 142.00, y: 593.00 mm</div>
<div class="sep" style="left:1664px;top:997px;height:18px"></div>
</div>
</body></html>
